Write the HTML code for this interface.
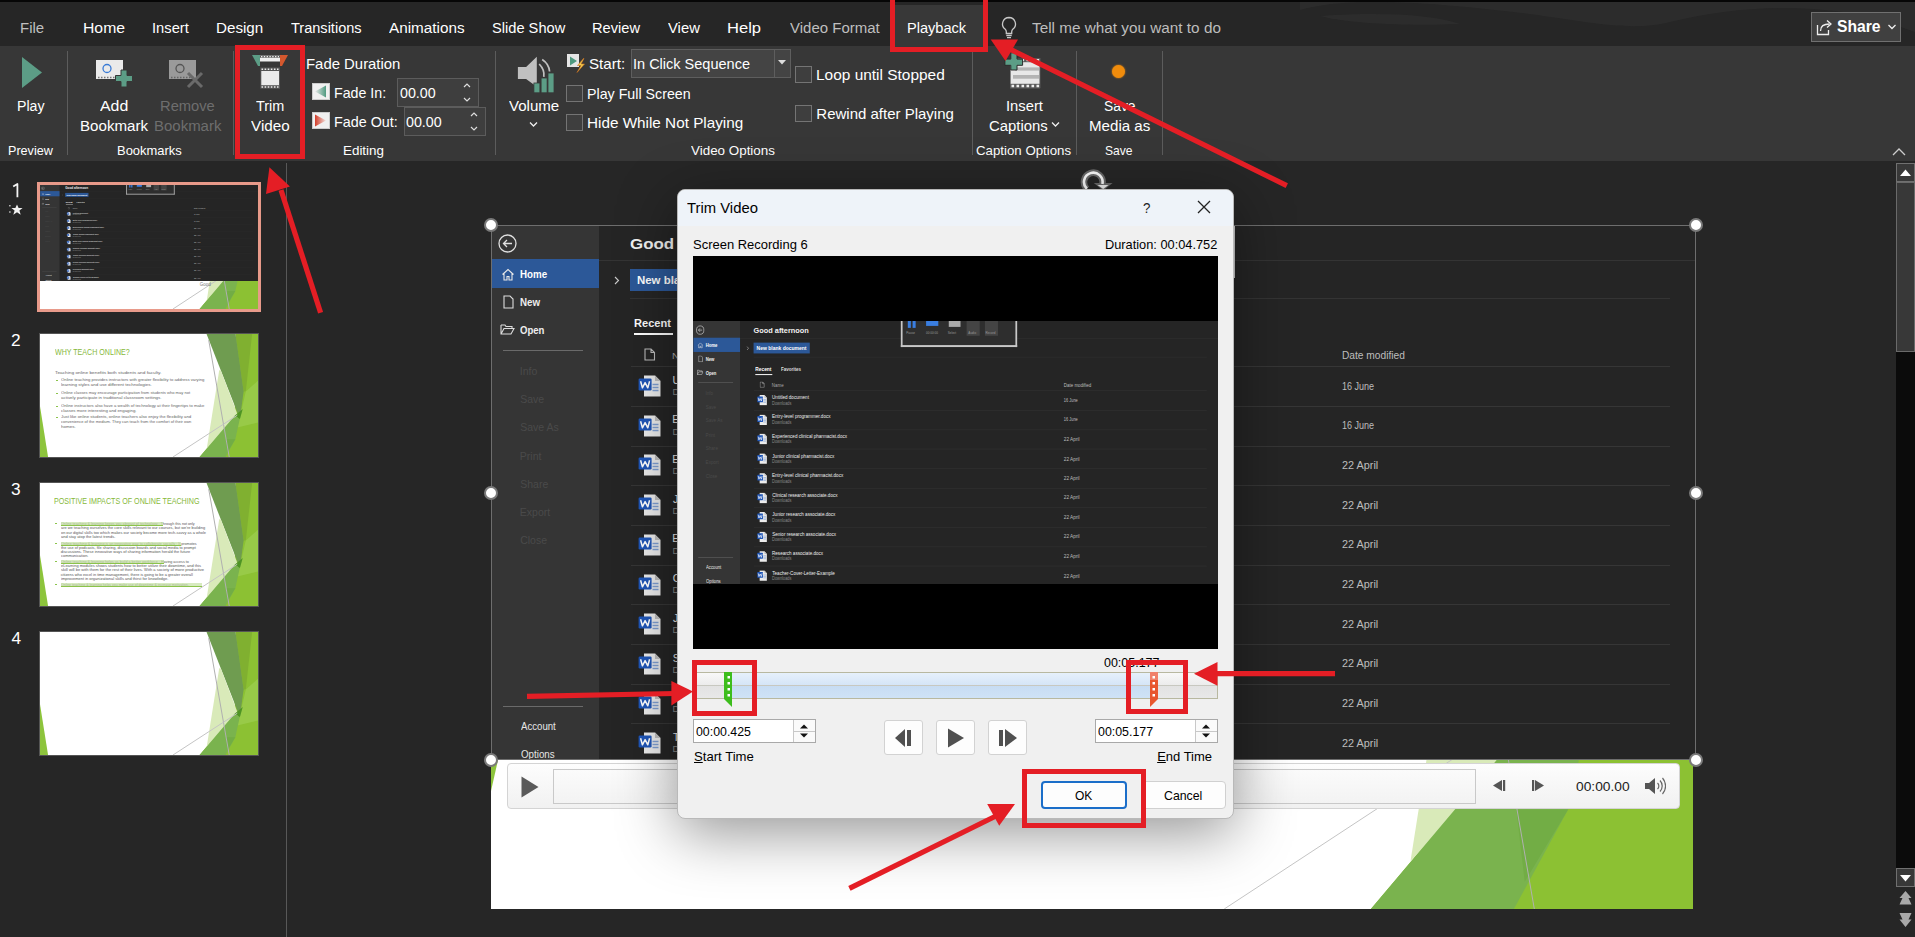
<!DOCTYPE html>
<html><head><meta charset="utf-8">
<style>*{margin:0;padding:0;box-sizing:border-box}
html,body{width:1915px;height:937px;overflow:hidden;background:#262626;font-family:"Liberation Sans",sans-serif}
body{position:relative}
.a{position:absolute}
.t{position:absolute;white-space:nowrap;line-height:1;transform-origin:0 0}
.cb{position:absolute;width:17px;height:17px;border:1px solid #747474;background:#3e3e3e}
.red{position:absolute;border:5px solid #e41e25}
.sep{position:absolute;top:51px;width:1px;height:104px;background:#5c5c5c}
</style></head><body>
<div class="a" style="left:0px;top:0px;width:1915px;height:46px;background:#262626"></div><div class="a" style="left:0px;top:0px;width:1915px;height:2px;background:#060606"></div><svg class="a" style="left:1230px;top:2px" width="685" height="44" viewBox="0 0 685 44"><g fill="#2e2e2e" opacity=".8"><path d="M70 8C120 -6 200 0 300 12C360 20 400 30 440 20C500 6 560 0 640 14L685 30V0H70z"/><path d="M90 14C150 10 200 12 230 22C180 24 120 22 90 14z"/></g></svg><div class="t" style="left:20.30px;top:19.68px;font-size:15.5px;color:#bfbfbf;transform:scaleX(0.9645);">File</div><div class="t" style="left:83.44px;top:19.68px;font-size:15.5px;color:#fff;transform:scaleX(1.0160);">Home</div><div class="t" style="left:152.28px;top:19.68px;font-size:15.5px;color:#fff;transform:scaleX(0.9496);">Insert</div><div class="t" style="left:216.39px;top:19.68px;font-size:15.5px;color:#fff;transform:scaleX(0.9792);">Design</div><div class="t" style="left:290.71px;top:19.68px;font-size:15.5px;color:#fff;transform:scaleX(0.9382);">Transitions</div><div class="t" style="left:389.00px;top:19.68px;font-size:15.5px;color:#fff;transform:scaleX(0.9855);">Animations</div><div class="t" style="left:491.64px;top:19.68px;font-size:15.5px;color:#fff;transform:scaleX(0.9443);">Slide Show</div><div class="t" style="left:591.83px;top:19.68px;font-size:15.5px;color:#fff;transform:scaleX(0.9435);">Review</div><div class="t" style="left:667.93px;top:19.68px;font-size:15.5px;color:#fff;transform:scaleX(0.9565);">View</div><div class="t" style="left:726.68px;top:19.68px;font-size:15.5px;color:#fff;transform:scaleX(1.0669);">Help</div><div class="t" style="left:789.93px;top:19.68px;font-size:15.5px;color:#bfbfbf;transform:scaleX(0.9672);">Video Format</div><div class="a" style="left:895px;top:5px;width:88px;height:41px;background:#383838"></div><div class="t" style="left:906.83px;top:19.68px;font-size:15.5px;color:#fff;transform:scaleX(0.9402);">Playback</div><svg class="a" style="left:998px;top:15px" width="22" height="24" viewBox="0 0 22 24"><path d="M11 2.5a6.5 6.5 0 0 0-4 11.6c.9.8 1.3 1.6 1.3 2.6v1.8h5.4v-1.8c0-1 .4-1.8 1.3-2.6A6.5 6.5 0 0 0 11 2.5z" fill="none" stroke="#c8c8c8" stroke-width="1.3"/><path d="M8.3 20.5h5.4M9 22.6h4" stroke="#c8c8c8" stroke-width="1.3"/></svg><div class="t" style="left:1032.29px;top:19.68px;font-size:15.5px;color:#bdbdbd;transform:scaleX(0.9877);">Tell me what you want to do</div><div class="a" style="left:1811px;top:12px;width:90px;height:30px;background:#404040;border:1px solid #707070"></div><svg class="a" style="left:1816px;top:18px" width="18" height="18" viewBox="0 0 18 18"><path d="M1.5 7v9.5h11V12" fill="none" stroke="#eee" stroke-width="1.3"/><path d="M4.5 13c0-5 3-7 9-7" fill="none" stroke="#eee" stroke-width="1.3"/><path d="M11 2.5l4 3.5-4 3.5" fill="none" stroke="#eee" stroke-width="1.3"/></svg><div class="t" style="left:1837.03px;top:19.46px;font-size:16px;color:#fff;font-weight:bold;transform:scaleX(0.9784);">Share</div><svg class="a" style="left:1887px;top:23px" width="10" height="8" viewBox="0 0 10 8"><path d="M1.5 2l3.5 3.5L8.5 2" fill="none" stroke="#eee" stroke-width="1.3"/></svg><div class="a" style="left:0px;top:46px;width:1915px;height:115px;background:#373737"></div><svg class="a" style="left:21px;top:56px" width="22" height="33" viewBox="0 0 22 33"><path d="M1 1L21 16.5 1 32z" fill="#5c9d86"/></svg><div class="t" style="left:17.37px;top:98.05px;font-size:15.3px;color:#fff;transform:scaleX(0.9252);">Play</div><div class="t" style="left:8.39px;top:144.80px;font-size:12.4px;color:#fff;transform:scaleX(1.0173);">Preview</div><div class="sep" style="left:67px"></div><svg class="a" style="left:95px;top:59px" width="40" height="30" viewBox="0 0 40 30"><rect x="1" y="1" width="27" height="19" fill="#eaeaea"/><path d="M3 18.5h23" stroke="#777" stroke-width="1.5" stroke-dasharray="1.5 1.5"/><circle cx="12" cy="9.5" r="4" fill="none" stroke="#3a7bd5" stroke-width="1.3"/><path d="M26 11h6v5.5h5.5v6H32V28h-6v-5.5h-5.5v-6H26z" fill="#5c9d86" stroke="#373737" stroke-width="1"/></svg><div class="t" style="left:100.30px;top:98.05px;font-size:15.3px;color:#fff;transform:scaleX(1.0404);">Add</div><div class="t" style="left:80.49px;top:117.75px;font-size:15.3px;color:#fff;transform:scaleX(0.9878);">Bookmark</div><svg class="a" style="left:168px;top:59px" width="40" height="32" viewBox="0 0 40 32"><rect x="1" y="1" width="27" height="19" fill="#9a9a9a"/><path d="M3 18.5h23" stroke="#666" stroke-width="1.5" stroke-dasharray="1.5 1.5"/><circle cx="12" cy="9.5" r="4" fill="none" stroke="#555" stroke-width="1.3"/><path d="M20 14l14 14M34 14L20 28" stroke="#6a6a6a" stroke-width="3"/></svg><div class="t" style="left:159.52px;top:98.05px;font-size:15.3px;color:#6e6e6e;transform:scaleX(0.9622);">Remove</div><div class="t" style="left:153.80px;top:117.75px;font-size:15.3px;color:#6e6e6e;transform:scaleX(0.9789);">Bookmark</div><div class="t" style="left:117.36px;top:144.80px;font-size:12.4px;color:#fff;transform:scaleX(1.0450);">Bookmarks</div><div class="sep" style="left:233px"></div><svg class="a" style="left:251px;top:54px" width="38" height="36" viewBox="0 0 38 36"><path d="M1 1h8v11H7z" fill="#5c9d86"/><path d="M29 1h8l-6 11h-2z" fill="#d4582e"/><rect x="9" y="1.5" width="20" height="6" fill="#eee"/><path d="M9 2.6h20" stroke="#555" stroke-width="2.2"/><path d="M10 2.6h18" stroke="#eee" stroke-width="1.2" stroke-dasharray="1.4 1.4"/><rect x="9.3" y="13.4" width="19.7" height="21.4" fill="#555"/><rect x="10.3" y="17" width="17.7" height="14.2" fill="#ebebeb"/><path d="M10.5 15.2h17M10.5 33h17" stroke="#eee" stroke-width="1.4" stroke-dasharray="1.6 1.5"/></svg><div class="t" style="left:256.01px;top:98.05px;font-size:15.3px;color:#fff;transform:scaleX(0.9421);">Trim</div><div class="t" style="left:250.52px;top:117.75px;font-size:15.3px;color:#fff;transform:scaleX(0.9955);">Video</div><div class="t" style="left:306.21px;top:56.30px;font-size:15px;color:#fff;transform:scaleX(0.9930);">Fade Duration</div><svg width="0" height="0" style="position:absolute"><defs><linearGradient id="gfi" x1="0" x2="1"><stop offset="0" stop-color="#e6e6e6"/><stop offset="1" stop-color="#4f9a80"/></linearGradient><linearGradient id="gfo" x1="0" x2="1"><stop offset="0" stop-color="#d23d2a"/><stop offset="1" stop-color="#f0e0dc"/></linearGradient></defs></svg><svg class="a" style="left:312px;top:83px" width="18" height="17" viewBox="0 0 18 17"><rect x="0.5" y="0.5" width="17" height="16" fill="#f0f0f0" stroke="#ccc"/><path d="M3 8.5L14 2.5v12z" fill="url(#gfi)"/></svg><div class="t" style="left:334.16px;top:85.30px;font-size:15px;color:#fff;transform:scaleX(0.9480);">Fade In:</div><div class="a" style="left:397px;top:78px;width:82px;height:29px;background:#3e3e3e;border:1px solid #5c5c5c"></div><div class="t" style="left:399.83px;top:85.30px;font-size:15px;color:#fff;transform:scaleX(0.9512);">00.00</div><svg class="a" style="left:462px;top:82px" width="10" height="22" viewBox="0 0 10 22"><path d="M2 5l3-3 3 3M2 16l3 3 3-3" fill="none" stroke="#ddd" stroke-width="1.2"/></svg><svg class="a" style="left:312px;top:112px" width="18" height="17" viewBox="0 0 18 17"><rect x="0.5" y="0.5" width="17" height="16" fill="#f0f0f0" stroke="#ccc"/><path d="M3 2.5L14 8.5 3 14.5z" fill="url(#gfo)"/></svg><div class="t" style="left:334.35px;top:113.90px;font-size:15px;color:#fff;transform:scaleX(0.9559);">Fade Out:</div><div class="a" style="left:404px;top:107px;width:82px;height:29px;background:#3e3e3e;border:1px solid #5c5c5c"></div><div class="t" style="left:406.43px;top:113.90px;font-size:15px;color:#fff;transform:scaleX(0.9512);">00.00</div><svg class="a" style="left:469px;top:111px" width="10" height="22" viewBox="0 0 10 22"><path d="M2 5l3-3 3 3M2 16l3 3 3-3" fill="none" stroke="#ddd" stroke-width="1.2"/></svg><div class="t" style="left:343.43px;top:144.80px;font-size:12.4px;color:#fff;transform:scaleX(1.0808);">Editing</div><div class="sep" style="left:495px"></div><svg class="a" style="left:515px;top:55px" width="42" height="40" viewBox="0 0 42 40"><path d="M2.9 12h8.2L21.8 1.8V31.7L11.1 24H2.9z" fill="#c0c0c0"/><path d="M24.2 9Q30 15 28.8 21.8M27.2 4.5Q34 9 34.6 16.5" fill="none" stroke="#c0c0c0" stroke-width="1.7"/><rect x="18.9" y="28" width="6" height="9.8" fill="#5c9d86" stroke="#373737" stroke-width=".8"/><rect x="26.1" y="23" width="6" height="14.8" fill="#5c9d86" stroke="#373737" stroke-width=".8"/><rect x="33" y="18" width="6" height="19.8" fill="#5c9d86" stroke="#373737" stroke-width=".8"/></svg><div class="t" style="left:509.32px;top:97.85px;font-size:15.3px;color:#fff;transform:scaleX(0.9849);">Volume</div><svg class="a" style="left:529px;top:121px" width="9" height="7" viewBox="0 0 9 7"><path d="M1 1.5l3.5 3.5L8 1.5" fill="none" stroke="#eee" stroke-width="1.3"/></svg><svg class="a" style="left:566px;top:53px" width="20" height="20" viewBox="0 0 20 20"><rect x="1" y="1" width="12" height="13" fill="#e6e6e6"/><path d="M4 3.5l7 4.5-7 4.5z" fill="#4f9a80"/><path d="M17.5 5.5L11.5 12.5h3.5L11 19.5l7.5-8.5h-3.5l3-5.5z" fill="#f0d050" stroke="#d07020" stroke-width=".6"/></svg><div class="t" style="left:589.32px;top:56.30px;font-size:15px;color:#fff;transform:scaleX(1.0074);">Start:</div><div class="a" style="left:631px;top:49px;width:160px;height:29px;background:#444;border:1px solid #5e5e5e"></div><div class="a" style="left:774px;top:50px;width:1px;height:27px;background:#5e5e5e"></div><svg class="a" style="left:778px;top:60px" width="8" height="5" viewBox="0 0 8 5"><path d="M0 0h8L4 4.5z" fill="#ddd"/></svg><div class="t" style="left:632.69px;top:56.30px;font-size:15px;color:#fff;transform:scaleX(0.9674);">In Click Sequence</div><div class="cb" style="left:566px;top:85px"></div><div class="t" style="left:587.26px;top:86.30px;font-size:15px;color:#fff;transform:scaleX(0.9493);">Play Full Screen</div><div class="cb" style="left:566px;top:114px"></div><div class="t" style="left:587.18px;top:115.30px;font-size:15px;color:#fff;transform:scaleX(1.0185);">Hide While Not Playing</div><div class="cb" style="left:795px;top:66px"></div><div class="t" style="left:816.27px;top:67.10px;font-size:15px;color:#fff;transform:scaleX(1.0291);">Loop until Stopped</div><div class="cb" style="left:795px;top:105px"></div><div class="t" style="left:816.30px;top:106.30px;font-size:15px;color:#fff;">Rewind after Playing</div><div class="t" style="left:690.93px;top:144.80px;font-size:12.4px;color:#fff;transform:scaleX(1.0817);">Video Options</div><div class="sep" style="left:972px"></div><svg class="a" style="left:1004px;top:52px" width="38" height="37" viewBox="0 0 38 37"><rect x="6.4" y="6.4" width="29.4" height="29.4" fill="#e8e8e8" stroke="#808080" stroke-width=".8"/><rect x="6" y="6" width="30" height="4.2" fill="#5a5a5a"/><path d="M7.5 8.1h28" stroke="#eee" stroke-width="2.2" stroke-dasharray="2.6 2.4"/><rect x="11" y="15.4" width="24" height="3.2" fill="#b4b4b4"/><rect x="9" y="23" width="26" height="3.7" fill="#b4b4b4"/><rect x="6" y="31.8" width="30" height="4.4" fill="#5a5a5a"/><path d="M7.5 34h28" stroke="#eee" stroke-width="2.4" stroke-dasharray="2.6 2.4"/><path d="M6.8 0.8h6.2v6.3h5.6v6.2H13V18H6.8v-4.7H0.9V7.1h5.9z" fill="#5c9d86" stroke="#2a2a2a" stroke-width="1"/></svg><div class="t" style="left:1006.07px;top:98.05px;font-size:15.3px;color:#fff;transform:scaleX(0.9648);">Insert</div><div class="t" style="left:988.56px;top:117.75px;font-size:15.3px;color:#fff;transform:scaleX(0.9736);">Captions</div><svg class="a" style="left:1051px;top:121px" width="9" height="7" viewBox="0 0 9 7"><path d="M1 1.5l3.5 3.5L8 1.5" fill="none" stroke="#eee" stroke-width="1.3"/></svg><div class="t" style="left:976.14px;top:144.80px;font-size:12.4px;color:#fff;transform:scaleX(1.0700);">Caption Options</div><div class="sep" style="left:1076px"></div><div class="a" style="left:1112px;top:65px;width:13px;height:13px;border-radius:50%;background:#f08c0c;box-shadow:0 0 2px #f08c0c"></div><div class="t" style="left:1104.08px;top:98.05px;font-size:15.3px;color:#fff;transform:scaleX(0.9043);">Save</div><div class="t" style="left:1089.39px;top:117.75px;font-size:15.3px;color:#fff;transform:scaleX(0.9874);">Media as</div><div class="t" style="left:1104.66px;top:144.80px;font-size:12.4px;color:#fff;transform:scaleX(0.9758);">Save</div><div class="sep" style="left:1162px"></div><svg class="a" style="left:1892px;top:147px" width="14" height="9" viewBox="0 0 14 9"><path d="M1 8l6-6 6 6" fill="none" stroke="#ccc" stroke-width="1.3"/></svg><div class="a" style="left:286px;top:163px;width:1px;height:774px;background:#585858"></div><svg class="a" style="left:10px;top:182px" width="12" height="17" viewBox="0 0 12 17"><path d="M3.2 4.6L7.4 2V15.2" fill="none" stroke="#f4f4f4" stroke-width="1.8" stroke-linejoin="round"/></svg><svg class="a" style="left:9px;top:203px" width="14" height="14" viewBox="0 0 14 14"><path d="M8 1.5l1.6 3.6h4l-3.2 2.5 1.3 4.2L8 9.3 4.3 11.8l1.3-4.2L2.4 5.1h4z" fill="#f0f0f0"/><path d="M-0.3 2.8h2M-0.3 9h2" stroke="#eee" stroke-width="1"/></svg><div class="a" style="left:37px;top:182px;width:224px;height:130px;background:#e89a8a"></div><div class="a" style="left:40px;top:185px;width:218px;height:124px;background:#fff"></div><svg class="a" style="left:40px;top:185px" width="218" height="124" viewBox="0 0 1000 1000" preserveAspectRatio="none">
<path d="M897 0L1000 0 1000 1000 732 1000 893 665z" fill="#8cc133"/>
<path d="M897 0L973 0 944 468 934 468z" fill="#80b030"/>
<path d="M764 0L897 0 934 468 917 692z" fill="#6f9c50"/>
<path d="M944 468L1000 380 1000 720 905 760z" fill="#b0dc70" opacity=".35"/>
<path d="M822 294L829 294 910 672 765 930z" fill="#d9eab9"/>
<path d="M732 1000L893 665 917 692 944 468 896 855 851 1000z" fill="#7ab34e"/>
<path d="M853 855L896 855 860 960z" fill="#72ad45"/>
<path d="M893 665L917 692 930 610z" fill="#4e9424"/>
<path d="M774 50L868 1000" stroke="#b0b0b0" stroke-width="1" vector-effect="non-scaling-stroke" fill="none"/>
<path d="M610 1000L905 660" stroke="#c4c4c4" stroke-width="1" vector-effect="non-scaling-stroke" fill="none"/>
</svg><div class="a" style="left:40px;top:185px;width:218px;height:96px;overflow:hidden"><div class="a" style="left:0px;top:0px;width:1205px;height:535px;overflow:hidden;transform-origin:0 0;transform:scale(0.1809,0.1794)"><div class="a" style="left:0px;top:0px;width:1205px;height:535px;background:#252525"></div><div class="a" style="left:0px;top:0px;width:108px;height:535px;background:#353535"></div><svg class="a" style="left:6px;top:8px" width="21" height="21" viewBox="0 0 21 21"><circle cx="10.5" cy="10.5" r="8.5" fill="none" stroke="#e0e0e0" stroke-width="1.3"/><path d="M15 10.5H6.5M10 7l-3.5 3.5L10 14" fill="none" stroke="#e0e0e0" stroke-width="1.3"/></svg><div class="a" style="left:1px;top:34px;width:107px;height:29px;background:#2c5898"></div><svg class="a" style="left:10px;top:43px" width="14" height="13" viewBox="0 0 14 13"><path d="M1.5 6.5L7 1.5l5.5 5M3 5.5V12h3V8.5h2V12h3V5.5" fill="none" stroke="#e8e8e8" stroke-width="1.1"/></svg><div class="t" style="left:28.87px;top:43.61px;font-size:10.5px;color:#fff;font-weight:bold;transform:scaleX(0.9292);">Home</div><svg class="a" style="left:12px;top:70px" width="11" height="14" viewBox="0 0 11 14"><path d="M1 1h6l3 3v9H1z" fill="none" stroke="#ddd" stroke-width="1.1"/></svg><div class="t" style="left:28.86px;top:71.91px;font-size:10.5px;color:#eee;font-weight:bold;transform:scaleX(0.9309);">New</div><svg class="a" style="left:9px;top:98px" width="15" height="12" viewBox="0 0 15 12"><path d="M1 2h4l1 1.5h6v2M1 2v9h10l3-5.5H4L1 11" fill="none" stroke="#ddd" stroke-width="1.1"/></svg><div class="t" style="left:29.12px;top:99.91px;font-size:10.5px;color:#eee;font-weight:bold;transform:scaleX(0.9116);">Open</div><div class="a" style="left:12px;top:125px;width:80px;height:1px;background:#6a6a6a"></div><div class="t" style="left:28.75px;top:140.61px;font-size:10.5px;color:#4a4a4a;">Info</div><div class="t" style="left:29.23px;top:168.91px;font-size:10.5px;color:#4a4a4a;">Save</div><div class="t" style="left:29.23px;top:197.21px;font-size:10.5px;color:#4a4a4a;">Save As</div><div class="t" style="left:28.86px;top:225.51px;font-size:10.5px;color:#4a4a4a;">Print</div><div class="t" style="left:29.23px;top:253.81px;font-size:10.5px;color:#4a4a4a;">Share</div><div class="t" style="left:28.86px;top:282.11px;font-size:10.5px;color:#4a4a4a;">Export</div><div class="t" style="left:29.18px;top:310.41px;font-size:10.5px;color:#4a4a4a;">Close</div><div class="a" style="left:12px;top:481px;width:80px;height:1px;background:#6a6a6a"></div><div class="t" style="left:30.00px;top:496.54px;font-size:10px;color:#e6e6e6;transform:scaleX(0.9626);">Account</div><div class="t" style="left:29.56px;top:524.53px;font-size:10px;color:#e6e6e6;transform:scaleX(0.9747);">Options</div><div class="a" style="left:108px;top:35px;width:1097px;height:1px;background:#343434"></div><div class="a" style="left:477px;top:-6px;width:267px;height:59px;background:#2e2e2e;border:4px solid #c8c8c8;border-top:none"></div><div class="a" style="left:493px;top:0px;width:7px;height:14px;background:#3a7ee0"></div><div class="a" style="left:504px;top:0px;width:7px;height:14px;background:#3a7ee0"></div><div class="a" style="left:535px;top:0px;width:28px;height:10px;background:#3a7ee0"></div><div class="a" style="left:587px;top:0px;width:27px;height:12px;background:#aaa"></div><div class="a" style="left:628px;top:0px;width:30px;height:30px;background:#444"></div><div class="a" style="left:670px;top:0px;width:30px;height:30px;background:#444"></div><div class="t" style="left:489.44px;top:20.07px;font-size:7px;color:#999;">Pause</div><div class="t" style="left:534.72px;top:20.07px;font-size:7px;color:#999;">00:00:00</div><div class="t" style="left:584.68px;top:20.07px;font-size:7px;color:#999;">Select</div><div class="t" style="left:632.00px;top:20.07px;font-size:7px;color:#999;">Audio</div><div class="t" style="left:671.44px;top:20.07px;font-size:7px;color:#999;">Record</div><div class="t" style="left:139.32px;top:12.47px;font-size:14.8px;color:#f2f2f2;font-weight:bold;transform:scaleX(1.1413);">Good afternoon</div><svg class="a" style="left:122px;top:51px" width="8" height="9" viewBox="0 0 8 9"><path d="M2 1l3.5 3.5L2 8" fill="none" stroke="#ccc" stroke-width="1.1"/></svg><div class="a" style="left:139px;top:44px;width:129px;height:22px;background:#2c5898"></div><div class="t" style="left:146.26px;top:50.11px;font-size:10.5px;color:#fff;font-weight:bold;transform:scaleX(1.0891);">New blank document</div><div class="a" style="left:139px;top:73px;width:1040px;height:1px;background:#343434"></div><div class="t" style="left:142.98px;top:93.11px;font-size:10.5px;color:#fff;font-weight:bold;transform:scaleX(1.0533);">Recent</div><div class="a" style="left:143px;top:108px;width:39px;height:2px;background:#fff"></div><div class="t" style="left:201.73px;top:93.11px;font-size:10.5px;color:#ddd;font-weight:bold;transform:scaleX(0.9875);">Favorites</div><svg class="a" style="left:153px;top:123px" width="12" height="13" viewBox="0 0 12 13"><path d="M1 1h6l3.5 3.5V12H1z M7 1v3.5h3.5" fill="none" stroke="#bbb" stroke-width="1.1"/></svg><div class="t" style="left:181.39px;top:125.96px;font-size:9.5px;color:#aaa;transform:scaleX(1.0692);">Name</div><div class="t" style="left:850.78px;top:125.53px;font-size:10px;color:#bdbdbd;transform:scaleX(1.0191);">Date modified</div><div class="a" style="left:140px;top:141px;width:1039px;height:1px;background:#363636"></div><svg class="a" style="left:146.5px;top:150.0px" width="23" height="22" viewBox="0 0 23 22"><path d="M6 0.5h11l5.5 5.5v15.5H6z" fill="#ececec"/><path d="M17 0.5v5.5h5.5" fill="#bdbdbd"/><path d="M14.5 9.5h6M14.5 12.5h6M14.5 15.5h6" stroke="#7f9fd2" stroke-width="1.3"/><rect x="0.6" y="3.5" width="13" height="12" rx="1.3" fill="#1f56b8"/><path d="M2.6 6.2l1.8 6.6 2.7-5.2 2.7 5.2 1.8-6.6" fill="none" stroke="#fff" stroke-width="1.5" stroke-linejoin="round"/></svg><div class="t" style="left:181.41px;top:149.61px;font-size:10.5px;color:#eee;">Untitled document</div><div class="t" style="left:181.48px;top:162.88px;font-size:9px;color:#8a8a8a;">Downloads</div><div class="t" style="left:850.92px;top:156.53px;font-size:10px;color:#bdbdbd;transform:scaleX(0.9012);">16 June</div><div class="a" style="left:140px;top:180.8px;width:1039px;height:1px;background:#363636"></div><svg class="a" style="left:146.5px;top:189.7px" width="23" height="22" viewBox="0 0 23 22"><path d="M6 0.5h11l5.5 5.5v15.5H6z" fill="#ececec"/><path d="M17 0.5v5.5h5.5" fill="#bdbdbd"/><path d="M14.5 9.5h6M14.5 12.5h6M14.5 15.5h6" stroke="#7f9fd2" stroke-width="1.3"/><rect x="0.6" y="3.5" width="13" height="12" rx="1.3" fill="#1f56b8"/><path d="M2.6 6.2l1.8 6.6 2.7-5.2 2.7 5.2 1.8-6.6" fill="none" stroke="#fff" stroke-width="1.5" stroke-linejoin="round"/></svg><div class="t" style="left:181.36px;top:189.31px;font-size:10.5px;color:#eee;">Entry-level programmer.docx</div><div class="t" style="left:181.48px;top:202.58px;font-size:9px;color:#8a8a8a;">Downloads</div><div class="t" style="left:850.92px;top:196.23px;font-size:10px;color:#bdbdbd;transform:scaleX(0.9012);">16 June</div><div class="a" style="left:140px;top:220.5px;width:1039px;height:1px;background:#363636"></div><svg class="a" style="left:146.5px;top:229.4px" width="23" height="22" viewBox="0 0 23 22"><path d="M6 0.5h11l5.5 5.5v15.5H6z" fill="#ececec"/><path d="M17 0.5v5.5h5.5" fill="#bdbdbd"/><path d="M14.5 9.5h6M14.5 12.5h6M14.5 15.5h6" stroke="#7f9fd2" stroke-width="1.3"/><rect x="0.6" y="3.5" width="13" height="12" rx="1.3" fill="#1f56b8"/><path d="M2.6 6.2l1.8 6.6 2.7-5.2 2.7 5.2 1.8-6.6" fill="none" stroke="#fff" stroke-width="1.5" stroke-linejoin="round"/></svg><div class="t" style="left:181.36px;top:229.01px;font-size:10.5px;color:#eee;">Experienced clinical pharmacist.docx</div><div class="t" style="left:181.48px;top:242.28px;font-size:9px;color:#8a8a8a;">Downloads</div><div class="t" style="left:851.06px;top:235.94px;font-size:10px;color:#bdbdbd;transform:scaleX(1.0870);">22 April</div><div class="a" style="left:140px;top:260.2px;width:1039px;height:1px;background:#363636"></div><svg class="a" style="left:146.5px;top:269.1px" width="23" height="22" viewBox="0 0 23 22"><path d="M6 0.5h11l5.5 5.5v15.5H6z" fill="#ececec"/><path d="M17 0.5v5.5h5.5" fill="#bdbdbd"/><path d="M14.5 9.5h6M14.5 12.5h6M14.5 15.5h6" stroke="#7f9fd2" stroke-width="1.3"/><rect x="0.6" y="3.5" width="13" height="12" rx="1.3" fill="#1f56b8"/><path d="M2.6 6.2l1.8 6.6 2.7-5.2 2.7 5.2 1.8-6.6" fill="none" stroke="#fff" stroke-width="1.5" stroke-linejoin="round"/></svg><div class="t" style="left:182.04px;top:268.71px;font-size:10.5px;color:#eee;">Junior clinical pharmacist.docx</div><div class="t" style="left:181.48px;top:281.98px;font-size:9px;color:#8a8a8a;">Downloads</div><div class="t" style="left:851.06px;top:275.64px;font-size:10px;color:#bdbdbd;transform:scaleX(1.0870);">22 April</div><div class="a" style="left:140px;top:299.9px;width:1039px;height:1px;background:#363636"></div><svg class="a" style="left:146.5px;top:308.8px" width="23" height="22" viewBox="0 0 23 22"><path d="M6 0.5h11l5.5 5.5v15.5H6z" fill="#ececec"/><path d="M17 0.5v5.5h5.5" fill="#bdbdbd"/><path d="M14.5 9.5h6M14.5 12.5h6M14.5 15.5h6" stroke="#7f9fd2" stroke-width="1.3"/><rect x="0.6" y="3.5" width="13" height="12" rx="1.3" fill="#1f56b8"/><path d="M2.6 6.2l1.8 6.6 2.7-5.2 2.7 5.2 1.8-6.6" fill="none" stroke="#fff" stroke-width="1.5" stroke-linejoin="round"/></svg><div class="t" style="left:181.36px;top:308.41px;font-size:10.5px;color:#eee;">Entry-level clinical pharmacist.docx</div><div class="t" style="left:181.48px;top:321.68px;font-size:9px;color:#8a8a8a;">Downloads</div><div class="t" style="left:851.06px;top:315.34px;font-size:10px;color:#bdbdbd;transform:scaleX(1.0870);">22 April</div><div class="a" style="left:140px;top:339.6px;width:1039px;height:1px;background:#363636"></div><svg class="a" style="left:146.5px;top:348.5px" width="23" height="22" viewBox="0 0 23 22"><path d="M6 0.5h11l5.5 5.5v15.5H6z" fill="#ececec"/><path d="M17 0.5v5.5h5.5" fill="#bdbdbd"/><path d="M14.5 9.5h6M14.5 12.5h6M14.5 15.5h6" stroke="#7f9fd2" stroke-width="1.3"/><rect x="0.6" y="3.5" width="13" height="12" rx="1.3" fill="#1f56b8"/><path d="M2.6 6.2l1.8 6.6 2.7-5.2 2.7 5.2 1.8-6.6" fill="none" stroke="#fff" stroke-width="1.5" stroke-linejoin="round"/></svg><div class="t" style="left:181.67px;top:348.11px;font-size:10.5px;color:#eee;">Clinical research associate.docx</div><div class="t" style="left:181.48px;top:361.38px;font-size:9px;color:#8a8a8a;">Downloads</div><div class="t" style="left:851.06px;top:355.04px;font-size:10px;color:#bdbdbd;transform:scaleX(1.0870);">22 April</div><div class="a" style="left:140px;top:379.3px;width:1039px;height:1px;background:#363636"></div><svg class="a" style="left:146.5px;top:388.2px" width="23" height="22" viewBox="0 0 23 22"><path d="M6 0.5h11l5.5 5.5v15.5H6z" fill="#ececec"/><path d="M17 0.5v5.5h5.5" fill="#bdbdbd"/><path d="M14.5 9.5h6M14.5 12.5h6M14.5 15.5h6" stroke="#7f9fd2" stroke-width="1.3"/><rect x="0.6" y="3.5" width="13" height="12" rx="1.3" fill="#1f56b8"/><path d="M2.6 6.2l1.8 6.6 2.7-5.2 2.7 5.2 1.8-6.6" fill="none" stroke="#fff" stroke-width="1.5" stroke-linejoin="round"/></svg><div class="t" style="left:182.04px;top:387.81px;font-size:10.5px;color:#eee;">Junior research associate.docx</div><div class="t" style="left:181.48px;top:401.08px;font-size:9px;color:#8a8a8a;">Downloads</div><div class="t" style="left:851.06px;top:394.74px;font-size:10px;color:#bdbdbd;transform:scaleX(1.0870);">22 April</div><div class="a" style="left:140px;top:419.0px;width:1039px;height:1px;background:#363636"></div><svg class="a" style="left:146.5px;top:427.9px" width="23" height="22" viewBox="0 0 23 22"><path d="M6 0.5h11l5.5 5.5v15.5H6z" fill="#ececec"/><path d="M17 0.5v5.5h5.5" fill="#bdbdbd"/><path d="M14.5 9.5h6M14.5 12.5h6M14.5 15.5h6" stroke="#7f9fd2" stroke-width="1.3"/><rect x="0.6" y="3.5" width="13" height="12" rx="1.3" fill="#1f56b8"/><path d="M2.6 6.2l1.8 6.6 2.7-5.2 2.7 5.2 1.8-6.6" fill="none" stroke="#fff" stroke-width="1.5" stroke-linejoin="round"/></svg><div class="t" style="left:181.73px;top:427.51px;font-size:10.5px;color:#eee;">Senior research associate.docx</div><div class="t" style="left:181.48px;top:440.78px;font-size:9px;color:#8a8a8a;">Downloads</div><div class="t" style="left:851.06px;top:434.44px;font-size:10px;color:#bdbdbd;transform:scaleX(1.0870);">22 April</div><div class="a" style="left:140px;top:458.7px;width:1039px;height:1px;background:#363636"></div><svg class="a" style="left:146.5px;top:467.6px" width="23" height="22" viewBox="0 0 23 22"><path d="M6 0.5h11l5.5 5.5v15.5H6z" fill="#ececec"/><path d="M17 0.5v5.5h5.5" fill="#bdbdbd"/><path d="M14.5 9.5h6M14.5 12.5h6M14.5 15.5h6" stroke="#7f9fd2" stroke-width="1.3"/><rect x="0.6" y="3.5" width="13" height="12" rx="1.3" fill="#1f56b8"/><path d="M2.6 6.2l1.8 6.6 2.7-5.2 2.7 5.2 1.8-6.6" fill="none" stroke="#fff" stroke-width="1.5" stroke-linejoin="round"/></svg><div class="t" style="left:181.36px;top:467.21px;font-size:10.5px;color:#eee;">Research associate.docx</div><div class="t" style="left:181.48px;top:480.48px;font-size:9px;color:#8a8a8a;">Downloads</div><div class="t" style="left:851.06px;top:474.14px;font-size:10px;color:#bdbdbd;transform:scaleX(1.0870);">22 April</div><div class="a" style="left:140px;top:498.4px;width:1039px;height:1px;background:#363636"></div><svg class="a" style="left:146.5px;top:507.3px" width="23" height="22" viewBox="0 0 23 22"><path d="M6 0.5h11l5.5 5.5v15.5H6z" fill="#ececec"/><path d="M17 0.5v5.5h5.5" fill="#bdbdbd"/><path d="M14.5 9.5h6M14.5 12.5h6M14.5 15.5h6" stroke="#7f9fd2" stroke-width="1.3"/><rect x="0.6" y="3.5" width="13" height="12" rx="1.3" fill="#1f56b8"/><path d="M2.6 6.2l1.8 6.6 2.7-5.2 2.7 5.2 1.8-6.6" fill="none" stroke="#fff" stroke-width="1.5" stroke-linejoin="round"/></svg><div class="t" style="left:181.99px;top:506.91px;font-size:10.5px;color:#eee;">Teacher-Cover-Letter-Example</div><div class="t" style="left:181.48px;top:520.18px;font-size:9px;color:#8a8a8a;">Downloads</div><div class="t" style="left:851.06px;top:513.83px;font-size:10px;color:#bdbdbd;transform:scaleX(1.0870);">22 April</div><div class="a" style="left:140px;top:538.1px;width:1039px;height:1px;background:#363636"></div></div></div><div class="t" style="left:199.78px;top:283.19px;font-size:4.5px;color:#777;">Good</div><div class="t" style="left:10.94px;top:331.56px;font-size:17.3px;color:#fff;">2</div><div class="a" style="left:39px;top:333px;width:220px;height:125px;background:#555"></div><div class="a" style="left:40px;top:334px;width:218px;height:123px;background:#fff"></div><svg class="a" style="left:40px;top:334px" width="218" height="123" viewBox="0 0 1000 1000" preserveAspectRatio="none">
<path d="M897 0L1000 0 1000 1000 732 1000 893 665z" fill="#8cc133"/>
<path d="M897 0L973 0 944 468 934 468z" fill="#80b030"/>
<path d="M764 0L897 0 934 468 917 692z" fill="#6f9c50"/>
<path d="M944 468L1000 380 1000 720 905 760z" fill="#b0dc70" opacity=".35"/>
<path d="M822 294L829 294 910 672 765 930z" fill="#d9eab9"/>
<path d="M732 1000L893 665 917 692 944 468 896 855 851 1000z" fill="#7ab34e"/>
<path d="M853 855L896 855 860 960z" fill="#72ad45"/>
<path d="M893 665L917 692 930 610z" fill="#4e9424"/>
<path d="M774 50L868 1000" stroke="#b0b0b0" stroke-width="1" vector-effect="non-scaling-stroke" fill="none"/>
<path d="M610 1000L905 660" stroke="#c4c4c4" stroke-width="1" vector-effect="non-scaling-stroke" fill="none"/>
<path d="M0 588L0 1000 37 1000z" fill="#8dc43c"/></svg><div class="t" style="left:11.11px;top:480.56px;font-size:17.3px;color:#fff;">3</div><div class="a" style="left:39px;top:482px;width:220px;height:125px;background:#555"></div><div class="a" style="left:40px;top:483px;width:218px;height:123px;background:#fff"></div><svg class="a" style="left:40px;top:483px" width="218" height="123" viewBox="0 0 1000 1000" preserveAspectRatio="none">
<path d="M897 0L1000 0 1000 1000 732 1000 893 665z" fill="#8cc133"/>
<path d="M897 0L973 0 944 468 934 468z" fill="#80b030"/>
<path d="M764 0L897 0 934 468 917 692z" fill="#6f9c50"/>
<path d="M944 468L1000 380 1000 720 905 760z" fill="#b0dc70" opacity=".35"/>
<path d="M822 294L829 294 910 672 765 930z" fill="#d9eab9"/>
<path d="M732 1000L893 665 917 692 944 468 896 855 851 1000z" fill="#7ab34e"/>
<path d="M853 855L896 855 860 960z" fill="#72ad45"/>
<path d="M893 665L917 692 930 610z" fill="#4e9424"/>
<path d="M774 50L868 1000" stroke="#b0b0b0" stroke-width="1" vector-effect="non-scaling-stroke" fill="none"/>
<path d="M610 1000L905 660" stroke="#c4c4c4" stroke-width="1" vector-effect="non-scaling-stroke" fill="none"/>
<path d="M0 588L0 1000 37 1000z" fill="#8dc43c"/></svg><div class="t" style="left:11.45px;top:629.56px;font-size:17.3px;color:#fff;">4</div><div class="a" style="left:39px;top:631px;width:220px;height:125px;background:#555"></div><div class="a" style="left:40px;top:632px;width:218px;height:123px;background:#fff"></div><svg class="a" style="left:40px;top:632px" width="218" height="123" viewBox="0 0 1000 1000" preserveAspectRatio="none">
<path d="M897 0L1000 0 1000 1000 732 1000 893 665z" fill="#8cc133"/>
<path d="M897 0L973 0 944 468 934 468z" fill="#80b030"/>
<path d="M764 0L897 0 934 468 917 692z" fill="#6f9c50"/>
<path d="M944 468L1000 380 1000 720 905 760z" fill="#b0dc70" opacity=".35"/>
<path d="M822 294L829 294 910 672 765 930z" fill="#d9eab9"/>
<path d="M732 1000L893 665 917 692 944 468 896 855 851 1000z" fill="#7ab34e"/>
<path d="M853 855L896 855 860 960z" fill="#72ad45"/>
<path d="M893 665L917 692 930 610z" fill="#4e9424"/>
<path d="M774 50L868 1000" stroke="#b0b0b0" stroke-width="1" vector-effect="non-scaling-stroke" fill="none"/>
<path d="M610 1000L905 660" stroke="#c4c4c4" stroke-width="1" vector-effect="non-scaling-stroke" fill="none"/>
<path d="M0 588L0 1000 37 1000z" fill="#8dc43c"/></svg><div class="t" style="left:54.56px;top:348.00px;font-size:8.5px;color:#86b83a;transform:scaleX(0.8352);">WHY TEACH ONLINE?</div><div class="t" style="left:54.90px;top:371.58px;font-size:3.8px;color:#666;transform:scaleX(1.2554);">Teaching online benefits both students and faculty.</div><div class="t" style="left:60.81px;top:378.58px;font-size:3.8px;color:#666;transform:scaleX(1.1135);">Online teaching provides instructors with greater flexibility to address varying</div><div class="t" style="left:60.71px;top:383.58px;font-size:3.8px;color:#666;transform:scaleX(1.1774);">learning styles and use different technologies.</div><div class="t" style="left:60.82px;top:391.58px;font-size:3.8px;color:#666;transform:scaleX(1.0751);">Online classes may encourage participation from students who may not</div><div class="t" style="left:60.82px;top:396.58px;font-size:3.8px;color:#666;transform:scaleX(1.1644);">actively participate in traditional classroom settings.</div><div class="t" style="left:60.81px;top:404.58px;font-size:3.8px;color:#666;transform:scaleX(1.1073);">Online instructors also have a wealth of technology at their fingertips to make</div><div class="t" style="left:60.83px;top:409.58px;font-size:3.8px;color:#666;transform:scaleX(1.1432);">classes more interesting and engaging.</div><div class="t" style="left:60.94px;top:415.58px;font-size:3.8px;color:#666;transform:scaleX(1.1281);">Just like online students, online teachers also enjoy the flexibility and</div><div class="t" style="left:60.84px;top:420.58px;font-size:3.8px;color:#666;transform:scaleX(1.0525);">convenience of the medium. They can teach from the comfort of their own</div><div class="t" style="left:60.69px;top:425.58px;font-size:3.8px;color:#666;transform:scaleX(1.1827);">homes.</div><div class="a" style="left:56px;top:380px;width:2px;height:1px;background:#8bc34a"></div><div class="a" style="left:56px;top:393px;width:2px;height:1px;background:#8bc34a"></div><div class="a" style="left:56px;top:406px;width:2px;height:1px;background:#8bc34a"></div><div class="a" style="left:56px;top:417px;width:2px;height:1px;background:#8bc34a"></div><div class="t" style="left:54.03px;top:496.80px;font-size:8.5px;color:#86b83a;transform:scaleX(0.8408);">POSITIVE IMPACTS OF ONLINE TEACHING</div><div class="t" style="left:60.64px;top:522.30px;font-size:3.9px;color:#555;transform:scaleX(0.9399);">Online teaching &amp; learning keeps you abreast of technology : Through this not only</div><div class="a" style="left:60.8px;top:525.4px;width:102px;height:0.9px;background:#8bc34a"></div><div class="a" style="left:60.8px;top:521.8px;width:102px;height:3px;background:rgba(255,255,255,.55)"></div><div class="a" style="left:60.8px;top:521.8px;width:102px;height:3px;background:rgba(139,195,74,.35)"></div><div class="t" style="left:60.64px;top:526.40px;font-size:3.9px;color:#555;transform:scaleX(1.0087);">are we teaching ourselves the core skills relevant to our courses, but we're building</div><div class="t" style="left:60.65px;top:531.00px;font-size:3.9px;color:#555;transform:scaleX(0.9933);">on our digital skills too which makes our society become more tech-savvy as a whole</div><div class="t" style="left:60.64px;top:535.10px;font-size:3.9px;color:#555;transform:scaleX(1.0222);">and stay atop the latest trends.</div><div class="t" style="left:60.63px;top:542.20px;font-size:3.9px;color:#555;transform:scaleX(0.9522);">Online teaching &amp; learning is an innovative way to collaborate socially : It promotes</div><div class="a" style="left:60.8px;top:545.3000000000001px;width:120.6px;height:0.9px;background:#8bc34a"></div><div class="a" style="left:60.8px;top:541.7px;width:120.6px;height:3px;background:rgba(255,255,255,.55)"></div><div class="a" style="left:60.8px;top:541.7px;width:120.6px;height:3px;background:rgba(139,195,74,.35)"></div><div class="t" style="left:60.74px;top:546.40px;font-size:3.9px;color:#555;transform:scaleX(0.9923);">the use of podcasts, file sharing, discussion boards and social media to prompt</div><div class="t" style="left:60.64px;top:550.20px;font-size:3.9px;color:#555;">discussions. These innovative ways of sharing information herald the future</div><div class="t" style="left:60.64px;top:554.10px;font-size:3.9px;color:#555;transform:scaleX(1.0077);">communication.</div><div class="t" style="left:60.63px;top:560.10px;font-size:3.9px;color:#555;transform:scaleX(0.9427);">Online teaching &amp; learning helps us build a better workforce : Having access to</div><div class="a" style="left:60.8px;top:563.2px;width:103.2px;height:0.9px;background:#8bc34a"></div><div class="a" style="left:60.8px;top:559.6px;width:103.2px;height:3px;background:rgba(255,255,255,.55)"></div><div class="a" style="left:60.8px;top:559.6px;width:103.2px;height:3px;background:rgba(139,195,74,.35)"></div><div class="t" style="left:60.64px;top:564.20px;font-size:3.9px;color:#555;transform:scaleX(1.0159);">eLearning modules shows students how to better utilize their downtime, and this</div><div class="t" style="left:60.68px;top:568.20px;font-size:3.9px;color:#555;transform:scaleX(1.0412);">skill will be with them for the rest of their lives. With a society of more productive</div><div class="t" style="left:60.64px;top:572.90px;font-size:3.9px;color:#555;">citizens who excel in time management, there is going to be a greater overall</div><div class="t" style="left:60.54px;top:577.00px;font-size:3.9px;color:#555;transform:scaleX(1.0237);">improvement in organizational skills and thirst for knowledge.</div><div class="t" style="left:60.64px;top:583.10px;font-size:3.9px;color:#555;transform:scaleX(0.8944);">Online teaching &amp; learning helps you make use of downtime &amp; increase motivation.</div><div class="a" style="left:60.8px;top:586.2px;width:141px;height:0.9px;background:#8bc34a"></div><div class="a" style="left:60.8px;top:582.6px;width:141px;height:3px;background:rgba(255,255,255,.55)"></div><div class="a" style="left:60.8px;top:582.6px;width:141px;height:3px;background:rgba(139,195,74,.35)"></div><div class="a" style="left:55px;top:522.5px;width:2px;height:1px;background:#8bc34a"></div><div class="a" style="left:55px;top:542.5px;width:2px;height:1px;background:#8bc34a"></div><div class="a" style="left:55px;top:560.5px;width:2px;height:1px;background:#8bc34a"></div><div class="a" style="left:55px;top:583.5px;width:2px;height:1px;background:#8bc34a"></div><div class="a" style="left:491px;top:225px;width:1202px;height:684px;background:#fff"></div><svg class="a" style="left:491px;top:225px" width="1202" height="684" viewBox="0 0 1000 1000" preserveAspectRatio="none">
<path d="M897 0L1000 0 1000 1000 732 1000 893 665z" fill="#8cc133"/>
<path d="M897 0L973 0 944 468 934 468z" fill="#80b030"/>
<path d="M764 0L897 0 934 468 917 692z" fill="#6f9c50"/>
<path d="M944 468L1000 380 1000 720 905 760z" fill="#b0dc70" opacity=".35"/>
<path d="M822 294L829 294 910 672 765 930z" fill="#d9eab9"/>
<path d="M732 1000L893 665 917 692 944 468 896 855 851 1000z" fill="#7ab34e"/>
<path d="M853 855L896 855 860 960z" fill="#72ad45"/>
<path d="M893 665L917 692 930 610z" fill="#4e9424"/>
<path d="M774 50L868 1000" stroke="#b0b0b0" stroke-width="1" vector-effect="non-scaling-stroke" fill="none"/>
<path d="M610 1000L905 660" stroke="#c4c4c4" stroke-width="1" vector-effect="non-scaling-stroke" fill="none"/>
</svg><svg class="a" style="left:491px;top:755px" width="10" height="40" viewBox="0 0 10 40"><path d="M0 0L7 5 0 36z" fill="#8dc43c"/></svg><div class="a" style="left:491px;top:225px;width:1205px;height:535px;overflow:hidden;transform-origin:0 0;transform:scale(1.0000,1.0000)"><div class="a" style="left:0px;top:0px;width:1205px;height:535px;background:#252525"></div><div class="a" style="left:0px;top:0px;width:108px;height:535px;background:#353535"></div><svg class="a" style="left:6px;top:8px" width="21" height="21" viewBox="0 0 21 21"><circle cx="10.5" cy="10.5" r="8.5" fill="none" stroke="#e0e0e0" stroke-width="1.3"/><path d="M15 10.5H6.5M10 7l-3.5 3.5L10 14" fill="none" stroke="#e0e0e0" stroke-width="1.3"/></svg><div class="a" style="left:1px;top:34px;width:107px;height:29px;background:#2c5898"></div><svg class="a" style="left:10px;top:43px" width="14" height="13" viewBox="0 0 14 13"><path d="M1.5 6.5L7 1.5l5.5 5M3 5.5V12h3V8.5h2V12h3V5.5" fill="none" stroke="#e8e8e8" stroke-width="1.1"/></svg><div class="t" style="left:28.87px;top:43.61px;font-size:10.5px;color:#fff;font-weight:bold;transform:scaleX(0.9292);">Home</div><svg class="a" style="left:12px;top:70px" width="11" height="14" viewBox="0 0 11 14"><path d="M1 1h6l3 3v9H1z" fill="none" stroke="#ddd" stroke-width="1.1"/></svg><div class="t" style="left:28.86px;top:71.91px;font-size:10.5px;color:#eee;font-weight:bold;transform:scaleX(0.9309);">New</div><svg class="a" style="left:9px;top:98px" width="15" height="12" viewBox="0 0 15 12"><path d="M1 2h4l1 1.5h6v2M1 2v9h10l3-5.5H4L1 11" fill="none" stroke="#ddd" stroke-width="1.1"/></svg><div class="t" style="left:29.12px;top:99.91px;font-size:10.5px;color:#eee;font-weight:bold;transform:scaleX(0.9116);">Open</div><div class="a" style="left:12px;top:125px;width:80px;height:1px;background:#6a6a6a"></div><div class="t" style="left:28.75px;top:140.61px;font-size:10.5px;color:#4a4a4a;">Info</div><div class="t" style="left:29.23px;top:168.91px;font-size:10.5px;color:#4a4a4a;">Save</div><div class="t" style="left:29.23px;top:197.21px;font-size:10.5px;color:#4a4a4a;">Save As</div><div class="t" style="left:28.86px;top:225.51px;font-size:10.5px;color:#4a4a4a;">Print</div><div class="t" style="left:29.23px;top:253.81px;font-size:10.5px;color:#4a4a4a;">Share</div><div class="t" style="left:28.86px;top:282.11px;font-size:10.5px;color:#4a4a4a;">Export</div><div class="t" style="left:29.18px;top:310.41px;font-size:10.5px;color:#4a4a4a;">Close</div><div class="a" style="left:12px;top:481px;width:80px;height:1px;background:#6a6a6a"></div><div class="t" style="left:30.00px;top:496.54px;font-size:10px;color:#e6e6e6;transform:scaleX(0.9626);">Account</div><div class="t" style="left:29.56px;top:524.53px;font-size:10px;color:#e6e6e6;transform:scaleX(0.9747);">Options</div><div class="a" style="left:108px;top:35px;width:1097px;height:1px;background:#343434"></div><div class="a" style="left:477px;top:-6px;width:267px;height:59px;background:#2e2e2e;border:4px solid #c8c8c8;border-top:none"></div><div class="a" style="left:493px;top:0px;width:7px;height:14px;background:#3a7ee0"></div><div class="a" style="left:504px;top:0px;width:7px;height:14px;background:#3a7ee0"></div><div class="a" style="left:535px;top:0px;width:28px;height:10px;background:#3a7ee0"></div><div class="a" style="left:587px;top:0px;width:27px;height:12px;background:#aaa"></div><div class="a" style="left:628px;top:0px;width:30px;height:30px;background:#444"></div><div class="a" style="left:670px;top:0px;width:30px;height:30px;background:#444"></div><div class="t" style="left:489.44px;top:20.07px;font-size:7px;color:#999;">Pause</div><div class="t" style="left:534.72px;top:20.07px;font-size:7px;color:#999;">00:00:00</div><div class="t" style="left:584.68px;top:20.07px;font-size:7px;color:#999;">Select</div><div class="t" style="left:632.00px;top:20.07px;font-size:7px;color:#999;">Audio</div><div class="t" style="left:671.44px;top:20.07px;font-size:7px;color:#999;">Record</div><div class="t" style="left:139.32px;top:12.47px;font-size:14.8px;color:#f2f2f2;font-weight:bold;transform:scaleX(1.1413);">Good afternoon</div><svg class="a" style="left:122px;top:51px" width="8" height="9" viewBox="0 0 8 9"><path d="M2 1l3.5 3.5L2 8" fill="none" stroke="#ccc" stroke-width="1.1"/></svg><div class="a" style="left:139px;top:44px;width:129px;height:22px;background:#2c5898"></div><div class="t" style="left:146.26px;top:50.11px;font-size:10.5px;color:#fff;font-weight:bold;transform:scaleX(1.0891);">New blank document</div><div class="a" style="left:139px;top:73px;width:1040px;height:1px;background:#343434"></div><div class="t" style="left:142.98px;top:93.11px;font-size:10.5px;color:#fff;font-weight:bold;transform:scaleX(1.0533);">Recent</div><div class="a" style="left:143px;top:108px;width:39px;height:2px;background:#fff"></div><div class="t" style="left:201.73px;top:93.11px;font-size:10.5px;color:#ddd;font-weight:bold;transform:scaleX(0.9875);">Favorites</div><svg class="a" style="left:153px;top:123px" width="12" height="13" viewBox="0 0 12 13"><path d="M1 1h6l3.5 3.5V12H1z M7 1v3.5h3.5" fill="none" stroke="#bbb" stroke-width="1.1"/></svg><div class="t" style="left:181.39px;top:125.96px;font-size:9.5px;color:#aaa;transform:scaleX(1.0692);">Name</div><div class="t" style="left:850.78px;top:125.53px;font-size:10px;color:#bdbdbd;transform:scaleX(1.0191);">Date modified</div><div class="a" style="left:140px;top:141px;width:1039px;height:1px;background:#363636"></div><svg class="a" style="left:146.5px;top:150.0px" width="23" height="22" viewBox="0 0 23 22"><path d="M6 0.5h11l5.5 5.5v15.5H6z" fill="#ececec"/><path d="M17 0.5v5.5h5.5" fill="#bdbdbd"/><path d="M14.5 9.5h6M14.5 12.5h6M14.5 15.5h6" stroke="#7f9fd2" stroke-width="1.3"/><rect x="0.6" y="3.5" width="13" height="12" rx="1.3" fill="#1f56b8"/><path d="M2.6 6.2l1.8 6.6 2.7-5.2 2.7 5.2 1.8-6.6" fill="none" stroke="#fff" stroke-width="1.5" stroke-linejoin="round"/></svg><div class="t" style="left:181.41px;top:149.61px;font-size:10.5px;color:#eee;">Untitled document</div><div class="t" style="left:181.48px;top:162.88px;font-size:9px;color:#8a8a8a;">Downloads</div><div class="t" style="left:850.92px;top:156.53px;font-size:10px;color:#bdbdbd;transform:scaleX(0.9012);">16 June</div><div class="a" style="left:140px;top:180.8px;width:1039px;height:1px;background:#363636"></div><svg class="a" style="left:146.5px;top:189.7px" width="23" height="22" viewBox="0 0 23 22"><path d="M6 0.5h11l5.5 5.5v15.5H6z" fill="#ececec"/><path d="M17 0.5v5.5h5.5" fill="#bdbdbd"/><path d="M14.5 9.5h6M14.5 12.5h6M14.5 15.5h6" stroke="#7f9fd2" stroke-width="1.3"/><rect x="0.6" y="3.5" width="13" height="12" rx="1.3" fill="#1f56b8"/><path d="M2.6 6.2l1.8 6.6 2.7-5.2 2.7 5.2 1.8-6.6" fill="none" stroke="#fff" stroke-width="1.5" stroke-linejoin="round"/></svg><div class="t" style="left:181.36px;top:189.31px;font-size:10.5px;color:#eee;">Entry-level programmer.docx</div><div class="t" style="left:181.48px;top:202.58px;font-size:9px;color:#8a8a8a;">Downloads</div><div class="t" style="left:850.92px;top:196.23px;font-size:10px;color:#bdbdbd;transform:scaleX(0.9012);">16 June</div><div class="a" style="left:140px;top:220.5px;width:1039px;height:1px;background:#363636"></div><svg class="a" style="left:146.5px;top:229.4px" width="23" height="22" viewBox="0 0 23 22"><path d="M6 0.5h11l5.5 5.5v15.5H6z" fill="#ececec"/><path d="M17 0.5v5.5h5.5" fill="#bdbdbd"/><path d="M14.5 9.5h6M14.5 12.5h6M14.5 15.5h6" stroke="#7f9fd2" stroke-width="1.3"/><rect x="0.6" y="3.5" width="13" height="12" rx="1.3" fill="#1f56b8"/><path d="M2.6 6.2l1.8 6.6 2.7-5.2 2.7 5.2 1.8-6.6" fill="none" stroke="#fff" stroke-width="1.5" stroke-linejoin="round"/></svg><div class="t" style="left:181.36px;top:229.01px;font-size:10.5px;color:#eee;">Experienced clinical pharmacist.docx</div><div class="t" style="left:181.48px;top:242.28px;font-size:9px;color:#8a8a8a;">Downloads</div><div class="t" style="left:851.06px;top:235.94px;font-size:10px;color:#bdbdbd;transform:scaleX(1.0870);">22 April</div><div class="a" style="left:140px;top:260.2px;width:1039px;height:1px;background:#363636"></div><svg class="a" style="left:146.5px;top:269.1px" width="23" height="22" viewBox="0 0 23 22"><path d="M6 0.5h11l5.5 5.5v15.5H6z" fill="#ececec"/><path d="M17 0.5v5.5h5.5" fill="#bdbdbd"/><path d="M14.5 9.5h6M14.5 12.5h6M14.5 15.5h6" stroke="#7f9fd2" stroke-width="1.3"/><rect x="0.6" y="3.5" width="13" height="12" rx="1.3" fill="#1f56b8"/><path d="M2.6 6.2l1.8 6.6 2.7-5.2 2.7 5.2 1.8-6.6" fill="none" stroke="#fff" stroke-width="1.5" stroke-linejoin="round"/></svg><div class="t" style="left:182.04px;top:268.71px;font-size:10.5px;color:#eee;">Junior clinical pharmacist.docx</div><div class="t" style="left:181.48px;top:281.98px;font-size:9px;color:#8a8a8a;">Downloads</div><div class="t" style="left:851.06px;top:275.64px;font-size:10px;color:#bdbdbd;transform:scaleX(1.0870);">22 April</div><div class="a" style="left:140px;top:299.9px;width:1039px;height:1px;background:#363636"></div><svg class="a" style="left:146.5px;top:308.8px" width="23" height="22" viewBox="0 0 23 22"><path d="M6 0.5h11l5.5 5.5v15.5H6z" fill="#ececec"/><path d="M17 0.5v5.5h5.5" fill="#bdbdbd"/><path d="M14.5 9.5h6M14.5 12.5h6M14.5 15.5h6" stroke="#7f9fd2" stroke-width="1.3"/><rect x="0.6" y="3.5" width="13" height="12" rx="1.3" fill="#1f56b8"/><path d="M2.6 6.2l1.8 6.6 2.7-5.2 2.7 5.2 1.8-6.6" fill="none" stroke="#fff" stroke-width="1.5" stroke-linejoin="round"/></svg><div class="t" style="left:181.36px;top:308.41px;font-size:10.5px;color:#eee;">Entry-level clinical pharmacist.docx</div><div class="t" style="left:181.48px;top:321.68px;font-size:9px;color:#8a8a8a;">Downloads</div><div class="t" style="left:851.06px;top:315.34px;font-size:10px;color:#bdbdbd;transform:scaleX(1.0870);">22 April</div><div class="a" style="left:140px;top:339.6px;width:1039px;height:1px;background:#363636"></div><svg class="a" style="left:146.5px;top:348.5px" width="23" height="22" viewBox="0 0 23 22"><path d="M6 0.5h11l5.5 5.5v15.5H6z" fill="#ececec"/><path d="M17 0.5v5.5h5.5" fill="#bdbdbd"/><path d="M14.5 9.5h6M14.5 12.5h6M14.5 15.5h6" stroke="#7f9fd2" stroke-width="1.3"/><rect x="0.6" y="3.5" width="13" height="12" rx="1.3" fill="#1f56b8"/><path d="M2.6 6.2l1.8 6.6 2.7-5.2 2.7 5.2 1.8-6.6" fill="none" stroke="#fff" stroke-width="1.5" stroke-linejoin="round"/></svg><div class="t" style="left:181.67px;top:348.11px;font-size:10.5px;color:#eee;">Clinical research associate.docx</div><div class="t" style="left:181.48px;top:361.38px;font-size:9px;color:#8a8a8a;">Downloads</div><div class="t" style="left:851.06px;top:355.04px;font-size:10px;color:#bdbdbd;transform:scaleX(1.0870);">22 April</div><div class="a" style="left:140px;top:379.3px;width:1039px;height:1px;background:#363636"></div><svg class="a" style="left:146.5px;top:388.2px" width="23" height="22" viewBox="0 0 23 22"><path d="M6 0.5h11l5.5 5.5v15.5H6z" fill="#ececec"/><path d="M17 0.5v5.5h5.5" fill="#bdbdbd"/><path d="M14.5 9.5h6M14.5 12.5h6M14.5 15.5h6" stroke="#7f9fd2" stroke-width="1.3"/><rect x="0.6" y="3.5" width="13" height="12" rx="1.3" fill="#1f56b8"/><path d="M2.6 6.2l1.8 6.6 2.7-5.2 2.7 5.2 1.8-6.6" fill="none" stroke="#fff" stroke-width="1.5" stroke-linejoin="round"/></svg><div class="t" style="left:182.04px;top:387.81px;font-size:10.5px;color:#eee;">Junior research associate.docx</div><div class="t" style="left:181.48px;top:401.08px;font-size:9px;color:#8a8a8a;">Downloads</div><div class="t" style="left:851.06px;top:394.74px;font-size:10px;color:#bdbdbd;transform:scaleX(1.0870);">22 April</div><div class="a" style="left:140px;top:419.0px;width:1039px;height:1px;background:#363636"></div><svg class="a" style="left:146.5px;top:427.9px" width="23" height="22" viewBox="0 0 23 22"><path d="M6 0.5h11l5.5 5.5v15.5H6z" fill="#ececec"/><path d="M17 0.5v5.5h5.5" fill="#bdbdbd"/><path d="M14.5 9.5h6M14.5 12.5h6M14.5 15.5h6" stroke="#7f9fd2" stroke-width="1.3"/><rect x="0.6" y="3.5" width="13" height="12" rx="1.3" fill="#1f56b8"/><path d="M2.6 6.2l1.8 6.6 2.7-5.2 2.7 5.2 1.8-6.6" fill="none" stroke="#fff" stroke-width="1.5" stroke-linejoin="round"/></svg><div class="t" style="left:181.73px;top:427.51px;font-size:10.5px;color:#eee;">Senior research associate.docx</div><div class="t" style="left:181.48px;top:440.78px;font-size:9px;color:#8a8a8a;">Downloads</div><div class="t" style="left:851.06px;top:434.44px;font-size:10px;color:#bdbdbd;transform:scaleX(1.0870);">22 April</div><div class="a" style="left:140px;top:458.7px;width:1039px;height:1px;background:#363636"></div><svg class="a" style="left:146.5px;top:467.6px" width="23" height="22" viewBox="0 0 23 22"><path d="M6 0.5h11l5.5 5.5v15.5H6z" fill="#ececec"/><path d="M17 0.5v5.5h5.5" fill="#bdbdbd"/><path d="M14.5 9.5h6M14.5 12.5h6M14.5 15.5h6" stroke="#7f9fd2" stroke-width="1.3"/><rect x="0.6" y="3.5" width="13" height="12" rx="1.3" fill="#1f56b8"/><path d="M2.6 6.2l1.8 6.6 2.7-5.2 2.7 5.2 1.8-6.6" fill="none" stroke="#fff" stroke-width="1.5" stroke-linejoin="round"/></svg><div class="t" style="left:181.36px;top:467.21px;font-size:10.5px;color:#eee;">Research associate.docx</div><div class="t" style="left:181.48px;top:480.48px;font-size:9px;color:#8a8a8a;">Downloads</div><div class="t" style="left:851.06px;top:474.14px;font-size:10px;color:#bdbdbd;transform:scaleX(1.0870);">22 April</div><div class="a" style="left:140px;top:498.4px;width:1039px;height:1px;background:#363636"></div><svg class="a" style="left:146.5px;top:507.3px" width="23" height="22" viewBox="0 0 23 22"><path d="M6 0.5h11l5.5 5.5v15.5H6z" fill="#ececec"/><path d="M17 0.5v5.5h5.5" fill="#bdbdbd"/><path d="M14.5 9.5h6M14.5 12.5h6M14.5 15.5h6" stroke="#7f9fd2" stroke-width="1.3"/><rect x="0.6" y="3.5" width="13" height="12" rx="1.3" fill="#1f56b8"/><path d="M2.6 6.2l1.8 6.6 2.7-5.2 2.7 5.2 1.8-6.6" fill="none" stroke="#fff" stroke-width="1.5" stroke-linejoin="round"/></svg><div class="t" style="left:181.99px;top:506.91px;font-size:10.5px;color:#eee;">Teacher-Cover-Letter-Example</div><div class="t" style="left:181.48px;top:520.18px;font-size:9px;color:#8a8a8a;">Downloads</div><div class="t" style="left:851.06px;top:513.83px;font-size:10px;color:#bdbdbd;transform:scaleX(1.0870);">22 April</div><div class="a" style="left:140px;top:538.1px;width:1039px;height:1px;background:#363636"></div></div><div class="a" style="left:491px;top:225px;width:1205px;height:535px;border:1px solid #6e6e6e"></div><div class="a" style="left:507px;top:763px;width:1173px;height:46px;background:linear-gradient(#fdfdfd,#f1f1f1);border:1px solid #d4d4d4;border-radius:4px"></div><svg class="a" style="left:520px;top:775px" width="20" height="24" viewBox="0 0 20 24"><path d="M1.5 1.5L18.5 12 1.5 22.5z" fill="#5a5a5a"/></svg><div class="a" style="left:553px;top:769px;width:923px;height:35px;background:linear-gradient(#fbfbfb,#f3f3f3);border:1px solid #c9c9c9"></div><svg class="a" style="left:1492px;top:779px" width="14" height="13" viewBox="0 0 14 13"><path d="M10 1L1 6.5 10 12z" fill="#555"/><rect x="11" y="1" width="2.2" height="11" fill="#555"/></svg><svg class="a" style="left:1531px;top:779px" width="14" height="13" viewBox="0 0 14 13"><rect x="1" y="1" width="2.2" height="11" fill="#555"/><path d="M4 1L13 6.5 4 12z" fill="#555"/></svg><div class="t" style="left:1576.45px;top:779.87px;font-size:13.5px;color:#222;transform:scaleX(1.0194);">00:00.00</div><svg class="a" style="left:1644px;top:776px" width="22" height="20" viewBox="0 0 22 20"><path d="M1 7h4l6-5v16l-6-5H1z" fill="#555"/><path d="M13.5 7a4 4 0 0 1 0 6M16 4.5a8 8 0 0 1 0 11M18.5 2a12 12 0 0 1 0 16" fill="none" stroke="#666" stroke-width="1.2"/></svg><div class="a" style="left:484px;top:218px;width:14px;height:14px;border-radius:50%;background:#fff;border:2.5px solid #7a7a7a"></div><div class="a" style="left:1689px;top:218px;width:14px;height:14px;border-radius:50%;background:#fff;border:2.5px solid #7a7a7a"></div><div class="a" style="left:484px;top:485.5px;width:14px;height:14px;border-radius:50%;background:#fff;border:2.5px solid #7a7a7a"></div><div class="a" style="left:1689px;top:485.5px;width:14px;height:14px;border-radius:50%;background:#fff;border:2.5px solid #7a7a7a"></div><div class="a" style="left:484px;top:753px;width:14px;height:14px;border-radius:50%;background:#fff;border:2.5px solid #7a7a7a"></div><div class="a" style="left:1689px;top:753px;width:14px;height:14px;border-radius:50%;background:#fff;border:2.5px solid #7a7a7a"></div><svg class="a" style="left:1078px;top:168px" width="38" height="21" viewBox="0 0 38 21"><path d="M8.96 20.8A9.3 9.3 0 1 1 24.4 15.9" fill="none" stroke="#6a6a6a" stroke-width="6.5"/><path d="M15.8 14.9H34.6L25.2 22.5z" fill="#6a6a6a"/><path d="M8.96 20.8A9.3 9.3 0 1 1 24.4 15.9" fill="none" stroke="#fafafa" stroke-width="2.6"/><path d="M19.5 17H30.5L25.2 21z" fill="#eee"/></svg><div class="a" style="left:1896px;top:163px;width:19px;height:705px;background:#0b0b0b"></div><div class="a" style="left:1896px;top:163px;width:19px;height:19px;background:#383838;border:1px solid #707070"></div><svg class="a" style="left:1899px;top:168px" width="13" height="9" viewBox="0 0 13 9"><path d="M1 8L6.5 1.5 12 8z" fill="#fff"/></svg><div class="a" style="left:1896px;top:182px;width:19px;height:170px;background:#383838;border:1px solid #6a6a6a"></div><div class="a" style="left:1896px;top:868px;width:19px;height:19px;background:#383838;border:1px solid #707070"></div><svg class="a" style="left:1899px;top:874px" width="13" height="9" viewBox="0 0 13 9"><path d="M1 1L6.5 7.5 12 1z" fill="#fff"/></svg><svg class="a" style="left:1899px;top:890px" width="13" height="38" viewBox="0 0 13 38"><path d="M6.5 1L12.5 8H9.5L12.5 14.5H.5L3.5 8H.5z" fill="#a8a8a8"/><path d="M.5 23H12.5L9.5 29.5H12.5L6.5 37 .5 29.5H3.5z" fill="#a8a8a8"/></svg><div class="a" style="left:677px;top:189px;width:557px;height:630px;background:#f0f0f0;border-radius:8px;border:1px solid #b9b9b9;box-shadow:0 14px 60px rgba(0,0,0,.42)"></div><div class="a" style="left:678px;top:190px;width:555px;height:36px;background:#eef3f9;border-radius:7px 7px 0 0"></div><div class="t" style="left:687.00px;top:200.30px;font-size:15px;color:#000;transform:scaleX(0.9887);">Trim Video</div><div class="t" style="left:1143.27px;top:200.00px;font-size:15px;color:#222;transform:scaleX(0.8889);">?</div><svg class="a" style="left:1197px;top:200px" width="14" height="14" viewBox="0 0 14 14"><path d="M1 1l12 12M13 1L1 13" stroke="#222" stroke-width="1.3"/></svg><div class="t" style="left:693.32px;top:238.03px;font-size:13.2px;color:#000;transform:scaleX(0.9839);">Screen Recording 6</div><div class="t" style="left:1104.58px;top:237.83px;font-size:13.2px;color:#000;transform:scaleX(0.9698);">Duration: 00:04.752</div><div class="a" style="left:693px;top:256px;width:525px;height:393px;background:#000"></div><div class="a" style="left:693px;top:321px;width:525px;height:263px;overflow:hidden"><div class="a" style="left:0px;top:0px;width:1205px;height:535px;overflow:hidden;transform-origin:0 0;transform:scale(0.4357,0.4916)"><div class="a" style="left:0px;top:0px;width:1205px;height:535px;background:#252525"></div><div class="a" style="left:0px;top:0px;width:108px;height:535px;background:#353535"></div><svg class="a" style="left:6px;top:8px" width="21" height="21" viewBox="0 0 21 21"><circle cx="10.5" cy="10.5" r="8.5" fill="none" stroke="#e0e0e0" stroke-width="1.3"/><path d="M15 10.5H6.5M10 7l-3.5 3.5L10 14" fill="none" stroke="#e0e0e0" stroke-width="1.3"/></svg><div class="a" style="left:1px;top:34px;width:107px;height:29px;background:#2c5898"></div><svg class="a" style="left:10px;top:43px" width="14" height="13" viewBox="0 0 14 13"><path d="M1.5 6.5L7 1.5l5.5 5M3 5.5V12h3V8.5h2V12h3V5.5" fill="none" stroke="#e8e8e8" stroke-width="1.1"/></svg><div class="t" style="left:28.87px;top:43.61px;font-size:10.5px;color:#fff;font-weight:bold;transform:scaleX(0.9292);">Home</div><svg class="a" style="left:12px;top:70px" width="11" height="14" viewBox="0 0 11 14"><path d="M1 1h6l3 3v9H1z" fill="none" stroke="#ddd" stroke-width="1.1"/></svg><div class="t" style="left:28.86px;top:71.91px;font-size:10.5px;color:#eee;font-weight:bold;transform:scaleX(0.9309);">New</div><svg class="a" style="left:9px;top:98px" width="15" height="12" viewBox="0 0 15 12"><path d="M1 2h4l1 1.5h6v2M1 2v9h10l3-5.5H4L1 11" fill="none" stroke="#ddd" stroke-width="1.1"/></svg><div class="t" style="left:29.12px;top:99.91px;font-size:10.5px;color:#eee;font-weight:bold;transform:scaleX(0.9116);">Open</div><div class="a" style="left:12px;top:125px;width:80px;height:1px;background:#6a6a6a"></div><div class="t" style="left:28.75px;top:140.61px;font-size:10.5px;color:#4a4a4a;">Info</div><div class="t" style="left:29.23px;top:168.91px;font-size:10.5px;color:#4a4a4a;">Save</div><div class="t" style="left:29.23px;top:197.21px;font-size:10.5px;color:#4a4a4a;">Save As</div><div class="t" style="left:28.86px;top:225.51px;font-size:10.5px;color:#4a4a4a;">Print</div><div class="t" style="left:29.23px;top:253.81px;font-size:10.5px;color:#4a4a4a;">Share</div><div class="t" style="left:28.86px;top:282.11px;font-size:10.5px;color:#4a4a4a;">Export</div><div class="t" style="left:29.18px;top:310.41px;font-size:10.5px;color:#4a4a4a;">Close</div><div class="a" style="left:12px;top:481px;width:80px;height:1px;background:#6a6a6a"></div><div class="t" style="left:30.00px;top:496.54px;font-size:10px;color:#e6e6e6;transform:scaleX(0.9626);">Account</div><div class="t" style="left:29.56px;top:524.53px;font-size:10px;color:#e6e6e6;transform:scaleX(0.9747);">Options</div><div class="a" style="left:108px;top:35px;width:1097px;height:1px;background:#343434"></div><div class="a" style="left:477px;top:-6px;width:267px;height:59px;background:#2e2e2e;border:4px solid #c8c8c8;border-top:none"></div><div class="a" style="left:493px;top:0px;width:7px;height:14px;background:#3a7ee0"></div><div class="a" style="left:504px;top:0px;width:7px;height:14px;background:#3a7ee0"></div><div class="a" style="left:535px;top:0px;width:28px;height:10px;background:#3a7ee0"></div><div class="a" style="left:587px;top:0px;width:27px;height:12px;background:#aaa"></div><div class="a" style="left:628px;top:0px;width:30px;height:30px;background:#444"></div><div class="a" style="left:670px;top:0px;width:30px;height:30px;background:#444"></div><div class="t" style="left:489.44px;top:20.07px;font-size:7px;color:#999;">Pause</div><div class="t" style="left:534.72px;top:20.07px;font-size:7px;color:#999;">00:00:00</div><div class="t" style="left:584.68px;top:20.07px;font-size:7px;color:#999;">Select</div><div class="t" style="left:632.00px;top:20.07px;font-size:7px;color:#999;">Audio</div><div class="t" style="left:671.44px;top:20.07px;font-size:7px;color:#999;">Record</div><div class="t" style="left:139.32px;top:12.47px;font-size:14.8px;color:#f2f2f2;font-weight:bold;transform:scaleX(1.1413);">Good afternoon</div><svg class="a" style="left:122px;top:51px" width="8" height="9" viewBox="0 0 8 9"><path d="M2 1l3.5 3.5L2 8" fill="none" stroke="#ccc" stroke-width="1.1"/></svg><div class="a" style="left:139px;top:44px;width:129px;height:22px;background:#2c5898"></div><div class="t" style="left:146.26px;top:50.11px;font-size:10.5px;color:#fff;font-weight:bold;transform:scaleX(1.0891);">New blank document</div><div class="a" style="left:139px;top:73px;width:1040px;height:1px;background:#343434"></div><div class="t" style="left:142.98px;top:93.11px;font-size:10.5px;color:#fff;font-weight:bold;transform:scaleX(1.0533);">Recent</div><div class="a" style="left:143px;top:108px;width:39px;height:2px;background:#fff"></div><div class="t" style="left:201.73px;top:93.11px;font-size:10.5px;color:#ddd;font-weight:bold;transform:scaleX(0.9875);">Favorites</div><svg class="a" style="left:153px;top:123px" width="12" height="13" viewBox="0 0 12 13"><path d="M1 1h6l3.5 3.5V12H1z M7 1v3.5h3.5" fill="none" stroke="#bbb" stroke-width="1.1"/></svg><div class="t" style="left:181.39px;top:125.96px;font-size:9.5px;color:#aaa;transform:scaleX(1.0692);">Name</div><div class="t" style="left:850.78px;top:125.53px;font-size:10px;color:#bdbdbd;transform:scaleX(1.0191);">Date modified</div><div class="a" style="left:140px;top:141px;width:1039px;height:1px;background:#363636"></div><svg class="a" style="left:146.5px;top:150.0px" width="23" height="22" viewBox="0 0 23 22"><path d="M6 0.5h11l5.5 5.5v15.5H6z" fill="#ececec"/><path d="M17 0.5v5.5h5.5" fill="#bdbdbd"/><path d="M14.5 9.5h6M14.5 12.5h6M14.5 15.5h6" stroke="#7f9fd2" stroke-width="1.3"/><rect x="0.6" y="3.5" width="13" height="12" rx="1.3" fill="#1f56b8"/><path d="M2.6 6.2l1.8 6.6 2.7-5.2 2.7 5.2 1.8-6.6" fill="none" stroke="#fff" stroke-width="1.5" stroke-linejoin="round"/></svg><div class="t" style="left:181.41px;top:149.61px;font-size:10.5px;color:#eee;">Untitled document</div><div class="t" style="left:181.48px;top:162.88px;font-size:9px;color:#8a8a8a;">Downloads</div><div class="t" style="left:850.92px;top:156.53px;font-size:10px;color:#bdbdbd;transform:scaleX(0.9012);">16 June</div><div class="a" style="left:140px;top:180.8px;width:1039px;height:1px;background:#363636"></div><svg class="a" style="left:146.5px;top:189.7px" width="23" height="22" viewBox="0 0 23 22"><path d="M6 0.5h11l5.5 5.5v15.5H6z" fill="#ececec"/><path d="M17 0.5v5.5h5.5" fill="#bdbdbd"/><path d="M14.5 9.5h6M14.5 12.5h6M14.5 15.5h6" stroke="#7f9fd2" stroke-width="1.3"/><rect x="0.6" y="3.5" width="13" height="12" rx="1.3" fill="#1f56b8"/><path d="M2.6 6.2l1.8 6.6 2.7-5.2 2.7 5.2 1.8-6.6" fill="none" stroke="#fff" stroke-width="1.5" stroke-linejoin="round"/></svg><div class="t" style="left:181.36px;top:189.31px;font-size:10.5px;color:#eee;">Entry-level programmer.docx</div><div class="t" style="left:181.48px;top:202.58px;font-size:9px;color:#8a8a8a;">Downloads</div><div class="t" style="left:850.92px;top:196.23px;font-size:10px;color:#bdbdbd;transform:scaleX(0.9012);">16 June</div><div class="a" style="left:140px;top:220.5px;width:1039px;height:1px;background:#363636"></div><svg class="a" style="left:146.5px;top:229.4px" width="23" height="22" viewBox="0 0 23 22"><path d="M6 0.5h11l5.5 5.5v15.5H6z" fill="#ececec"/><path d="M17 0.5v5.5h5.5" fill="#bdbdbd"/><path d="M14.5 9.5h6M14.5 12.5h6M14.5 15.5h6" stroke="#7f9fd2" stroke-width="1.3"/><rect x="0.6" y="3.5" width="13" height="12" rx="1.3" fill="#1f56b8"/><path d="M2.6 6.2l1.8 6.6 2.7-5.2 2.7 5.2 1.8-6.6" fill="none" stroke="#fff" stroke-width="1.5" stroke-linejoin="round"/></svg><div class="t" style="left:181.36px;top:229.01px;font-size:10.5px;color:#eee;">Experienced clinical pharmacist.docx</div><div class="t" style="left:181.48px;top:242.28px;font-size:9px;color:#8a8a8a;">Downloads</div><div class="t" style="left:851.06px;top:235.94px;font-size:10px;color:#bdbdbd;transform:scaleX(1.0870);">22 April</div><div class="a" style="left:140px;top:260.2px;width:1039px;height:1px;background:#363636"></div><svg class="a" style="left:146.5px;top:269.1px" width="23" height="22" viewBox="0 0 23 22"><path d="M6 0.5h11l5.5 5.5v15.5H6z" fill="#ececec"/><path d="M17 0.5v5.5h5.5" fill="#bdbdbd"/><path d="M14.5 9.5h6M14.5 12.5h6M14.5 15.5h6" stroke="#7f9fd2" stroke-width="1.3"/><rect x="0.6" y="3.5" width="13" height="12" rx="1.3" fill="#1f56b8"/><path d="M2.6 6.2l1.8 6.6 2.7-5.2 2.7 5.2 1.8-6.6" fill="none" stroke="#fff" stroke-width="1.5" stroke-linejoin="round"/></svg><div class="t" style="left:182.04px;top:268.71px;font-size:10.5px;color:#eee;">Junior clinical pharmacist.docx</div><div class="t" style="left:181.48px;top:281.98px;font-size:9px;color:#8a8a8a;">Downloads</div><div class="t" style="left:851.06px;top:275.64px;font-size:10px;color:#bdbdbd;transform:scaleX(1.0870);">22 April</div><div class="a" style="left:140px;top:299.9px;width:1039px;height:1px;background:#363636"></div><svg class="a" style="left:146.5px;top:308.8px" width="23" height="22" viewBox="0 0 23 22"><path d="M6 0.5h11l5.5 5.5v15.5H6z" fill="#ececec"/><path d="M17 0.5v5.5h5.5" fill="#bdbdbd"/><path d="M14.5 9.5h6M14.5 12.5h6M14.5 15.5h6" stroke="#7f9fd2" stroke-width="1.3"/><rect x="0.6" y="3.5" width="13" height="12" rx="1.3" fill="#1f56b8"/><path d="M2.6 6.2l1.8 6.6 2.7-5.2 2.7 5.2 1.8-6.6" fill="none" stroke="#fff" stroke-width="1.5" stroke-linejoin="round"/></svg><div class="t" style="left:181.36px;top:308.41px;font-size:10.5px;color:#eee;">Entry-level clinical pharmacist.docx</div><div class="t" style="left:181.48px;top:321.68px;font-size:9px;color:#8a8a8a;">Downloads</div><div class="t" style="left:851.06px;top:315.34px;font-size:10px;color:#bdbdbd;transform:scaleX(1.0870);">22 April</div><div class="a" style="left:140px;top:339.6px;width:1039px;height:1px;background:#363636"></div><svg class="a" style="left:146.5px;top:348.5px" width="23" height="22" viewBox="0 0 23 22"><path d="M6 0.5h11l5.5 5.5v15.5H6z" fill="#ececec"/><path d="M17 0.5v5.5h5.5" fill="#bdbdbd"/><path d="M14.5 9.5h6M14.5 12.5h6M14.5 15.5h6" stroke="#7f9fd2" stroke-width="1.3"/><rect x="0.6" y="3.5" width="13" height="12" rx="1.3" fill="#1f56b8"/><path d="M2.6 6.2l1.8 6.6 2.7-5.2 2.7 5.2 1.8-6.6" fill="none" stroke="#fff" stroke-width="1.5" stroke-linejoin="round"/></svg><div class="t" style="left:181.67px;top:348.11px;font-size:10.5px;color:#eee;">Clinical research associate.docx</div><div class="t" style="left:181.48px;top:361.38px;font-size:9px;color:#8a8a8a;">Downloads</div><div class="t" style="left:851.06px;top:355.04px;font-size:10px;color:#bdbdbd;transform:scaleX(1.0870);">22 April</div><div class="a" style="left:140px;top:379.3px;width:1039px;height:1px;background:#363636"></div><svg class="a" style="left:146.5px;top:388.2px" width="23" height="22" viewBox="0 0 23 22"><path d="M6 0.5h11l5.5 5.5v15.5H6z" fill="#ececec"/><path d="M17 0.5v5.5h5.5" fill="#bdbdbd"/><path d="M14.5 9.5h6M14.5 12.5h6M14.5 15.5h6" stroke="#7f9fd2" stroke-width="1.3"/><rect x="0.6" y="3.5" width="13" height="12" rx="1.3" fill="#1f56b8"/><path d="M2.6 6.2l1.8 6.6 2.7-5.2 2.7 5.2 1.8-6.6" fill="none" stroke="#fff" stroke-width="1.5" stroke-linejoin="round"/></svg><div class="t" style="left:182.04px;top:387.81px;font-size:10.5px;color:#eee;">Junior research associate.docx</div><div class="t" style="left:181.48px;top:401.08px;font-size:9px;color:#8a8a8a;">Downloads</div><div class="t" style="left:851.06px;top:394.74px;font-size:10px;color:#bdbdbd;transform:scaleX(1.0870);">22 April</div><div class="a" style="left:140px;top:419.0px;width:1039px;height:1px;background:#363636"></div><svg class="a" style="left:146.5px;top:427.9px" width="23" height="22" viewBox="0 0 23 22"><path d="M6 0.5h11l5.5 5.5v15.5H6z" fill="#ececec"/><path d="M17 0.5v5.5h5.5" fill="#bdbdbd"/><path d="M14.5 9.5h6M14.5 12.5h6M14.5 15.5h6" stroke="#7f9fd2" stroke-width="1.3"/><rect x="0.6" y="3.5" width="13" height="12" rx="1.3" fill="#1f56b8"/><path d="M2.6 6.2l1.8 6.6 2.7-5.2 2.7 5.2 1.8-6.6" fill="none" stroke="#fff" stroke-width="1.5" stroke-linejoin="round"/></svg><div class="t" style="left:181.73px;top:427.51px;font-size:10.5px;color:#eee;">Senior research associate.docx</div><div class="t" style="left:181.48px;top:440.78px;font-size:9px;color:#8a8a8a;">Downloads</div><div class="t" style="left:851.06px;top:434.44px;font-size:10px;color:#bdbdbd;transform:scaleX(1.0870);">22 April</div><div class="a" style="left:140px;top:458.7px;width:1039px;height:1px;background:#363636"></div><svg class="a" style="left:146.5px;top:467.6px" width="23" height="22" viewBox="0 0 23 22"><path d="M6 0.5h11l5.5 5.5v15.5H6z" fill="#ececec"/><path d="M17 0.5v5.5h5.5" fill="#bdbdbd"/><path d="M14.5 9.5h6M14.5 12.5h6M14.5 15.5h6" stroke="#7f9fd2" stroke-width="1.3"/><rect x="0.6" y="3.5" width="13" height="12" rx="1.3" fill="#1f56b8"/><path d="M2.6 6.2l1.8 6.6 2.7-5.2 2.7 5.2 1.8-6.6" fill="none" stroke="#fff" stroke-width="1.5" stroke-linejoin="round"/></svg><div class="t" style="left:181.36px;top:467.21px;font-size:10.5px;color:#eee;">Research associate.docx</div><div class="t" style="left:181.48px;top:480.48px;font-size:9px;color:#8a8a8a;">Downloads</div><div class="t" style="left:851.06px;top:474.14px;font-size:10px;color:#bdbdbd;transform:scaleX(1.0870);">22 April</div><div class="a" style="left:140px;top:498.4px;width:1039px;height:1px;background:#363636"></div><svg class="a" style="left:146.5px;top:507.3px" width="23" height="22" viewBox="0 0 23 22"><path d="M6 0.5h11l5.5 5.5v15.5H6z" fill="#ececec"/><path d="M17 0.5v5.5h5.5" fill="#bdbdbd"/><path d="M14.5 9.5h6M14.5 12.5h6M14.5 15.5h6" stroke="#7f9fd2" stroke-width="1.3"/><rect x="0.6" y="3.5" width="13" height="12" rx="1.3" fill="#1f56b8"/><path d="M2.6 6.2l1.8 6.6 2.7-5.2 2.7 5.2 1.8-6.6" fill="none" stroke="#fff" stroke-width="1.5" stroke-linejoin="round"/></svg><div class="t" style="left:181.99px;top:506.91px;font-size:10.5px;color:#eee;">Teacher-Cover-Letter-Example</div><div class="t" style="left:181.48px;top:520.18px;font-size:9px;color:#8a8a8a;">Downloads</div><div class="t" style="left:851.06px;top:513.83px;font-size:10px;color:#bdbdbd;transform:scaleX(1.0870);">22 April</div><div class="a" style="left:140px;top:538.1px;width:1039px;height:1px;background:#363636"></div></div></div><div class="t" style="left:1104.10px;top:657.29px;font-size:12.3px;color:#000;transform:scaleX(1.0144);">00:05.177</div><div class="a" style="left:696px;top:672px;width:522px;height:27px;background:linear-gradient(#f8f8f8 0%,#ececec 48%,#e2e2e2 52%,#e8e8e8 100%);border:1px solid #b8b8a0"></div><div class="a" style="left:728px;top:673px;width:424px;height:25px;background:linear-gradient(#e6f0fb 0%,#d5e5f7 48%,#c7dcf3 52%,#cfe2f6 100%)"></div><div class="a" style="left:697px;top:685px;width:520px;height:1px;background:#c8c8c0"></div><svg class="a" style="left:723px;top:672px" width="10" height="36" viewBox="0 0 10 36"><path d="M1 0H9V35L1 27z" fill="#3dbd1c"/><rect x="4.5" y="4" width="2.5" height="2.5" fill="#fff"/><rect x="4.5" y="10" width="2.5" height="2.5" fill="#fff"/><rect x="4.5" y="16" width="2.5" height="2.5" fill="#fff"/><rect x="4.5" y="22" width="2.5" height="2.5" fill="#fff"/></svg><svg class="a" style="left:1149px;top:672px" width="10" height="36" viewBox="0 0 10 36"><path d="M1 0H9V27L1 35z" fill="#e8572e"/><path d="M1 0H9V8H1z" fill="#f0806a"/><rect x="3.5" y="4" width="2.5" height="2.5" fill="#fff"/><rect x="3.5" y="10" width="2.5" height="2.5" fill="#fff"/><rect x="3.5" y="16" width="2.5" height="2.5" fill="#fff"/><rect x="3.5" y="22" width="2.5" height="2.5" fill="#fff"/></svg><div class="a" style="left:693px;top:719px;width:123px;height:24px;background:#fff;border:1px solid #a9a9a9"></div><div class="t" style="left:695.81px;top:724.70px;font-size:13px;color:#000;transform:scaleX(0.9505);">00:00.425</div><div class="a" style="left:793px;top:720px;width:22px;height:22px;background:#fafafa;border-left:1px solid #c8c8c8"></div><div class="a" style="left:794px;top:730.5px;width:21px;height:1px;background:#c8c8c8"></div><svg class="a" style="left:799px;top:723px" width="10" height="16" viewBox="0 0 10 16"><path d="M1 5.5L5 1.5 9 5.5z M1 10.5L5 14.5 9 10.5z" fill="#111"/></svg><div class="a" style="left:1095px;top:719px;width:123px;height:24px;background:#fff;border:1px solid #a9a9a9"></div><div class="t" style="left:1097.80px;top:724.70px;font-size:13px;color:#000;transform:scaleX(0.9527);">00:05.177</div><div class="a" style="left:1195px;top:720px;width:22px;height:22px;background:#fafafa;border-left:1px solid #c8c8c8"></div><div class="a" style="left:1196px;top:730.5px;width:21px;height:1px;background:#c8c8c8"></div><svg class="a" style="left:1201px;top:723px" width="10" height="16" viewBox="0 0 10 16"><path d="M1 5.5L5 1.5 9 5.5z M1 10.5L5 14.5 9 10.5z" fill="#111"/></svg><div class="t" style="left:693.71px;top:750.00px;font-size:13px;color:#000;transform:scaleX(1.0096);"><u>S</u>tart Time</div><div class="t" style="left:1157.16px;top:750.00px;font-size:13px;color:#000;"><u>E</u>nd Time</div><div class="a" style="left:884px;top:720px;width:39px;height:35px;background:#fdfdfd;border:1px solid #d2d2d2;border-radius:3px"></div><div class="a" style="left:936px;top:720px;width:39px;height:35px;background:#fdfdfd;border:1px solid #d2d2d2;border-radius:3px"></div><div class="a" style="left:988px;top:720px;width:39px;height:35px;background:#fdfdfd;border:1px solid #d2d2d2;border-radius:3px"></div><svg class="a" style="left:893px;top:727px" width="22" height="22" viewBox="0 0 22 22"><path d="M12 2L2 11 12 20z" fill="#505050"/><rect x="14" y="3" width="4" height="16" fill="#505050"/></svg><svg class="a" style="left:945px;top:727px" width="22" height="22" viewBox="0 0 22 22"><path d="M3 1.5L19 11 3 20.5z" fill="#505050"/></svg><svg class="a" style="left:997px;top:727px" width="22" height="22" viewBox="0 0 22 22"><rect x="2" y="3" width="4" height="16" fill="#505050"/><path d="M8 2L20 11 8 20z" fill="#505050"/></svg><div class="a" style="left:1041px;top:781px;width:86px;height:28px;background:#fdfdfd;border:2px solid #1b6ec9;border-radius:4px"></div><div class="t" style="left:1075.06px;top:788.57px;font-size:13.5px;color:#000;transform:scaleX(0.8900);">OK</div><div class="a" style="left:1141px;top:781px;width:85px;height:28px;background:#fdfdfd;border:1px solid #d0d0d0;border-radius:4px"></div><div class="t" style="left:1163.68px;top:788.57px;font-size:13.5px;color:#000;transform:scaleX(0.9126);">Cancel</div><div class="red" style="left:890px;top:-5px;width:98px;height:57px"></div><div class="red" style="left:235px;top:45px;width:70px;height:114px"></div><div class="red" style="left:692px;top:659.5px;width:65px;height:56px"></div><div class="red" style="left:1126px;top:659.5px;width:62px;height:54.5px"></div><div class="red" style="left:1022px;top:769px;width:124px;height:59px"></div><svg class="a" style="left:0;top:0" width="1915" height="937" viewBox="0 0 1915 937"><line x1="1286.8" y1="185.7" x2="1005" y2="46.7" stroke="#e41e25" stroke-width="5.2"/><line x1="320.6" y1="312.8" x2="281" y2="190" stroke="#e41e25" stroke-width="5.2"/><line x1="527" y1="696.3" x2="675" y2="693.5" stroke="#e41e25" stroke-width="5.2"/><line x1="1335" y1="673.7" x2="1210" y2="673.7" stroke="#e41e25" stroke-width="5.2"/><line x1="849.4" y1="888.4" x2="1000" y2="814" stroke="#e41e25" stroke-width="5.2"/><polygon points="990.7,39.5 1018,39.5 1005.5,61" fill="#e41e25"/><polygon points="269.4,167.2 266,194.1 289.9,186.5" fill="#e41e25"/><polygon points="693,691.5 671.4,681 671.4,705.5" fill="#e41e25"/><polygon points="1194,673.7 1217.5,662 1217.5,685.7" fill="#e41e25"/><polygon points="1015,803.9 987.2,803.9 999.2,825.8" fill="#e41e25"/></svg>
</body></html>
